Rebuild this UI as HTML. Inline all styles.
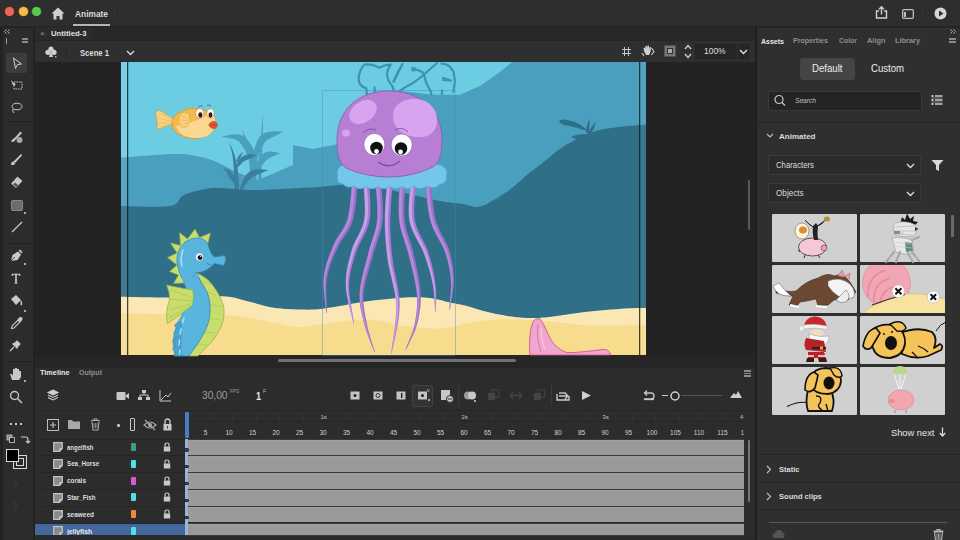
<!DOCTYPE html>
<html><head><meta charset="utf-8">
<style>
*{margin:0;padding:0;box-sizing:border-box}
html,body{width:960px;height:540px;overflow:hidden;background:#1d1d1d;font-family:"Liberation Sans",sans-serif;color:#d8d8d8}
.a{position:absolute}
.t{position:absolute;white-space:nowrap;line-height:1}
svg{position:absolute;overflow:visible}
</style></head><body>
<div class="a" style="left:0px;top:0px;width:960px;height:27px;background:#2e2e2e;"></div>
<div class="a" style="left:0px;top:26px;width:960px;height:1px;background:#242424;"></div>
<div class="a" style="left:5.1px;top:7.3px;width:9.2px;height:9.2px;border-radius:50%;background:#ec6559;box-shadow:0 0 0 0.6px #8a2a22"></div>
<div class="a" style="left:18.5px;top:7.3px;width:9.2px;height:9.2px;border-radius:50%;background:#f2bd4c;box-shadow:0 0 0 0.6px #8a6010"></div>
<div class="a" style="left:32.0px;top:7.3px;width:9.2px;height:9.2px;border-radius:50%;background:#5fc454;box-shadow:0 0 0 0.6px #1f6a18"></div>
<svg style="left:51px;top:7px" width="14" height="13" viewBox="0 0 14 13"><path d="M7 0.5 L13.5 6.5 L11.5 6.5 L11.5 12.5 L8.5 12.5 L8.5 9 L5.5 9 L5.5 12.5 L2.5 12.5 L2.5 6.5 L0.5 6.5 Z" fill="#cfcfcf"/></svg>
<div class="t" style="left:75px;top:9.46px;font-size:9.5px;color:#dcdcdc;font-weight:bold;transform:scaleX(0.880);transform-origin:0 0;">Animate</div>
<div class="a" style="left:73px;top:24px;width:37px;height:2px;background:#b5b5b5;"></div>
<div class="a" style="left:117px;top:8px;width:1px;height:12px;background:#282828;"></div>
<svg style="left:875px;top:6px" width="13" height="13" viewBox="0 0 13 13"><path d="M4 5 H1.5 V12 H11.5 V5 H9 M6.5 8.5 V1 M4 3.2 L6.5 0.8 L9 3.2" fill="none" stroke="#cfcfcf" stroke-width="1.4"/></svg>
<svg style="left:902px;top:9px" width="12" height="10" viewBox="0 0 12 10"><rect x="0.7" y="0.7" width="10.6" height="8.6" rx="1" fill="none" stroke="#bdbdbd" stroke-width="1.3"/><rect x="2" y="3" width="2" height="5" fill="#bdbdbd"/></svg>
<div class="a" style="left:925px;top:4px;width:1px;height:17px;background:#282828;"></div>
<svg style="left:934px;top:7px" width="13" height="13" viewBox="0 0 13 13"><circle cx="6.5" cy="6.5" r="6" fill="#d6d6d6"/><path d="M5 3.5 L9.5 6.5 L5 9.5 Z" fill="#2e2e2e"/></svg>
<div class="a" style="left:0px;top:27px;width:35px;height:513px;background:#222222;"></div>
<div class="a" style="left:3px;top:28px;width:30px;height:512px;background:#2c2c2c;"></div>
<div class="a" style="left:6px;top:38px;width:1px;height:6px;background:#9a9a9a;"></div>
<div class="a" style="left:22px;top:38px;width:6px;height:2px;background:#8a8a8a;"></div>
<div class="a" style="left:22px;top:41px;width:6px;height:2px;background:#8a8a8a;"></div>
<div class="a" style="left:6px;top:53px;width:21px;height:20px;background:#3c3c3c;border-radius:2px"></div>
<svg style="left:4px;top:29px" width="7" height="5" viewBox="0 0 7 5"><path d="M2.5 0.5 L0.5 2.5 L2.5 4.5 M5.5 0.5 L3.5 2.5 L5.5 4.5" stroke="#b0b0b0" fill="none" stroke-width="1"/></svg>
<svg style="left:12px;top:57px" width="11" height="13" viewBox="0 0 11 13"><path d="M1.5 1 L9.5 7 L5.5 7.5 L3.5 11.5 Z" fill="none" stroke="#d0d0d0" stroke-width="1"/></svg>
<svg style="left:10px;top:79px" width="14" height="13" viewBox="0 0 14 13"><path d="M1 1 L6 6 L3 6.5 Z" fill="#c8c8c8"/><rect x="4" y="3" width="8" height="7" fill="none" stroke="#c8c8c8" stroke-dasharray="1.5 1"/></svg>
<svg style="left:10px;top:102px" width="13" height="12" viewBox="0 0 13 12"><ellipse cx="7" cy="4.5" rx="5" ry="3.3" fill="none" stroke="#c8c8c8" stroke-width="1"/><path d="M3 7 Q2 9 4 11" fill="none" stroke="#c8c8c8"/></svg>
<div class="a" style="left:4px;top:121px;width:28px;height:1px;background:#232323;"></div>
<svg style="left:10px;top:130px" width="14" height="14" viewBox="0 0 14 14"><path d="M1 12 Q1.5 9 4 8.5 L10.5 1.5 L12 3 L5.5 9.5 Q5 12 1 12Z" fill="#c8c8c8"/><circle cx="9.5" cy="10" r="3" fill="#a8a8a8"/></svg>
<svg style="left:10px;top:153px" width="13" height="13" viewBox="0 0 13 13"><path d="M1 12 Q1 8.5 4 8 L11 1 L12.2 2.2 L5.5 9.5 Q5 12.5 1 12Z" fill="#c8c8c8"/><path d="M3.5 8.5 L5 10" stroke="#2c2c2c" stroke-width=".6"/></svg>
<svg style="left:10px;top:175px" width="13" height="13" viewBox="0 0 13 13"><path d="M1.5 8.5 L7.5 2 L12 6 L6 12.5 Z" fill="#c8c8c8" stroke="#c8c8c8" stroke-width=".8"/><path d="M3 9.5 L5 7.5 L8.5 10.5 L6 12Z" fill="#555"/></svg>
<svg style="left:10.5px;top:199.5px" width="12" height="11" viewBox="0 0 12 11"><rect x="0.5" y="0.5" width="11" height="10" rx="1" fill="#6c6c6c" stroke="#9a9a9a" stroke-width=".8"/></svg>
<div class="a" style="left:24px;top:212px;width:2px;height:2px;background:#aaa;"></div>
<svg style="left:10.5px;top:221px" width="12" height="12" viewBox="0 0 12 12"><path d="M1 11 L11 1" stroke="#c8c8c8" stroke-width="1.3"/></svg>
<div class="a" style="left:4px;top:243px;width:28px;height:1px;background:#232323;"></div>
<svg style="left:10px;top:249px" width="14" height="14" viewBox="0 0 14 14"><path d="M1 12 L2.5 6 L8 2.5 L11 5.5 L7.5 11 Z" fill="#c8c8c8"/><path d="M1 12 L5 8" stroke="#2c2c2c" stroke-width=".8"/><path d="M8.5 1.5 L10 0.5 L12.5 3 L11.5 4.5Z" fill="#c8c8c8"/></svg>
<div class="a" style="left:24px;top:262.5px;width:2px;height:2px;background:#aaa;"></div>
<div class="a" style="left:24px;top:309.5px;width:2px;height:2px;background:#aaa;"></div>
<div class="a" style="left:24px;top:380px;width:2px;height:2px;background:#aaa;"></div>
<svg style="left:11px;top:273px" width="10" height="11" viewBox="0 0 10 11"><path d="M0.7 0.7 H9.3 V3 H8.3 L8 1.8 H5.8 V9.5 L7 10.2 V10.6 H3 V10.2 L4.2 9.5 V1.8 H2 L1.7 3 H0.7Z" fill="#d0d0d0"/></svg>
<svg style="left:9px;top:294px" width="14" height="14" viewBox="0 0 14 14"><path d="M2 5 L7 1 L12 6 L7 11 Z" fill="#c8c8c8"/><path d="M12 7 Q13 10 12 11" stroke="#c8c8c8" stroke-width="1.5" fill="none"/></svg>
<svg style="left:10px;top:316px" width="14" height="14" viewBox="0 0 14 14"><path d="M1.5 12.5 L2 10 L8 4 L10 6 L4 12Z" fill="none" stroke="#c8c8c8" stroke-width="1.1"/><path d="M7.5 3 L10 1 Q12 0.5 12.5 2 Q13 3.5 11 5.5 L11 6.5 L7 2.5Z" fill="#c8c8c8"/></svg>
<svg style="left:9px;top:339px" width="13" height="13" viewBox="0 0 13 13"><path d="M1 12 L5 8 M4 5 L8 9 L9 7 L11 5 L8 2 L6 4 Z" stroke="#c8c8c8" stroke-width="1.2" fill="#c8c8c8"/></svg>
<div class="a" style="left:4px;top:361px;width:28px;height:1px;background:#232323;"></div>
<svg style="left:9px;top:367px" width="14" height="14" viewBox="0 0 14 14"><path d="M3 13 L1 7 L3 7 L4 9 L4 2 L6 2 L6 7 L6 1 L8 1 L8 7 L8 2 L10 2 L10 7 L10 4 L12 4 L12 10 L10 13 Z" fill="#c8c8c8"/></svg>
<svg style="left:9px;top:390px" width="14" height="14" viewBox="0 0 14 14"><circle cx="5.5" cy="5.5" r="4" fill="none" stroke="#c8c8c8" stroke-width="1.3"/><path d="M8.5 8.5 L13 13" stroke="#c8c8c8" stroke-width="1.5"/></svg>
<div class="a" style="left:10px;top:423px;width:2px;height:2px;background:#c8c8c8;"></div>
<div class="a" style="left:15px;top:423px;width:2px;height:2px;background:#c8c8c8;"></div>
<div class="a" style="left:20px;top:423px;width:2px;height:2px;background:#c8c8c8;"></div>
<svg style="left:6px;top:434px" width="10" height="10" viewBox="0 0 10 10"><rect x="1" y="1" width="5" height="5" fill="#888" stroke="#ccc" stroke-width=".8"/><rect x="3.5" y="3.5" width="5" height="5" fill="#222" stroke="#ccc" stroke-width=".8"/></svg>
<svg style="left:19px;top:434px" width="10" height="10" viewBox="0 0 10 10"><path d="M2 3 L7 3 Q9 3 9 6 L9 9 M7 7 L9 9 L11 7" stroke="#c8c8c8" stroke-width="1.2" fill="none"/></svg>
<div class="a" style="left:13px;top:455px;width:14px;height:14px;background:#2c2c2c;border:1.5px solid #d8d8d8"></div>
<div class="a" style="left:16px;top:458px;width:8px;height:8px;background:#2c2c2c;border:1px solid #d8d8d8"></div>
<div class="a" style="left:6px;top:449px;width:13px;height:13px;background:#000;border:1.5px solid #d8d8d8"></div>
<svg style="left:11px;top:478px" width="8" height="12" viewBox="0 0 8 12"><path d="M2 1 L6 6 L2 11" stroke="#3a3a3a" stroke-width="1.2" fill="none"/></svg>
<svg style="left:11px;top:500px" width="8" height="12" viewBox="0 0 8 12"><path d="M2 1 L6 6 L2 11" stroke="#3a3a3a" stroke-width="1.2" fill="none"/></svg>
<div class="a" style="left:35px;top:27px;width:721px;height:14px;background:#282828;"></div>
<div class="a" style="left:35px;top:27px;width:58px;height:14px;background:#2b2b2b;"></div>
<div class="t" style="left:40px;top:29.73px;font-size:8px;color:#9a9a9a;">×</div>
<div class="t" style="left:50.8px;top:29.91px;font-size:7.2px;color:#e0e0e0;font-weight:bold;transform:scaleX(1.069);transform-origin:0 0;">Untitled-3</div>
<div class="a" style="left:35px;top:40px;width:721px;height:22px;background:#2f2f2f;"></div>
<div class="a" style="left:35px;top:40px;width:721px;height:1px;background:#262626;"></div>
<svg style="left:45px;top:46px" width="12" height="12" viewBox="0 0 12 12"><circle cx="6" cy="3" r="2.6" fill="#cfcfcf"/><circle cx="3" cy="6.3" r="2.6" fill="#cfcfcf"/><circle cx="9" cy="6.3" r="2.6" fill="#cfcfcf"/><path d="M6 5 L8 11 L4 11 Z" fill="#cfcfcf"/><path d="M10 10 L11.5 10 L11.5 11.5 L10 11.5Z" fill="#aaa"/></svg>
<div class="a" style="left:66px;top:44px;width:1px;height:15px;background:#272727;"></div>
<div class="t" style="left:80px;top:47.79px;font-size:9.7px;color:#dedede;font-weight:bold;transform:scaleX(0.791);transform-origin:0 0;">Scene 1</div>
<svg style="left:126px;top:50px" width="9" height="6" viewBox="0 0 9 6"><path d="M1 1 L4.5 4.5 L8 1" fill="none" stroke="#d8d8d8" stroke-width="1.4"/></svg>
<svg style="left:621px;top:46px" width="11" height="11" viewBox="0 0 11 11"><path d="M3.5 1 V10 M7.5 1 V10 M1 3.5 H10 M1 7.5 H10" stroke="#cfcfcf" stroke-width="0.9"/><rect x="3.5" y="3.5" width="4" height="4" fill="none" stroke="#cfcfcf" stroke-width="0.6"/></svg>
<svg style="left:641px;top:44px" width="14" height="14" viewBox="0 0 14 14"><path d="M3 7 L2.5 4 L4 3.5 L4.5 5.5 L4.5 2 L6 1.8 L6.3 5 L6.5 1.5 L8 1.7 L8 5.2 L8.8 2.8 L10 3.2 L9.5 8 L8 11 L5 11 Z" fill="#d0d0d0"/><path d="M10.5 4 L13 7.5 L10.5 11 M1 9 L3 12" fill="none" stroke="#cfcfcf" stroke-width="1.1"/></svg>
<svg style="left:664px;top:45px" width="12" height="12" viewBox="0 0 12 12"><rect x="0.5" y="0.5" width="11" height="11" fill="#777"/><rect x="3" y="3" width="6" height="6" fill="#2f2f2f"/><rect x="4" y="4" width="4" height="4" fill="#aaa"/></svg>
<svg style="left:684px;top:44px" width="8" height="15" viewBox="0 0 8 15"><path d="M1 5 L4 1.5 L7 5 M1 10 L4 13.5 L7 10" fill="none" stroke="#cfcfcf" stroke-width="1.3"/></svg>
<div class="a" style="left:695px;top:44px;width:54px;height:15px;background:#262626;border:1px solid #232323"></div>
<div class="a" style="left:737px;top:44px;width:1px;height:15px;background:#333;"></div>
<div class="t" style="left:704.4px;top:47.22px;font-size:8.6px;color:#dedede;transform:scaleX(0.982);transform-origin:0 0;">100%</div>
<svg style="left:739px;top:49px" width="9" height="6" viewBox="0 0 9 6"><path d="M1 1 L4.5 4.5 L8 1" fill="none" stroke="#e0e0e0" stroke-width="1.4"/></svg>
<div class="a" style="left:35px;top:62px;width:721px;height:306px;background:#232323;"></div>
<div class="a" style="left:35px;top:356px;width:720px;height:11.5px;background:#262626;"></div>
<div class="a" style="left:278px;top:359px;width:238px;height:3px;background:#727272;border-radius:1.5px"></div>
<div class="a" style="left:748px;top:180px;width:2px;height:50px;background:#5a5a5a;border-radius:1px"></div>
<div class="a" style="left:755px;top:26px;width:2px;height:514px;background:#1f1f1f;"></div>
<svg style="left:121px;top:62px" width="525" height="293" viewBox="121 62 525 293"><rect x="121" y="62" width="525" height="293" fill="#6ccde2"/><g fill="none" stroke="#3f93b2" stroke-width="2.2" stroke-linecap="round" stroke-linejoin="round"><path d="M367 95 L366.3 88.1 Q361 87 359 82 Q358 76 360 72 Q362 66 365 64.4 Q372 64 376 66 Q379 68.5 381 67 Q385 64.5 390.7 64.6 Q387 70 387 74.8 Q387.5 80 390 83 Q394 87 394.4 95"/><path d="M374.4 87.4 L375.2 93"/><path d="M398 92 Q405 87 413 83 Q419 79 422 76.3 Q430 69 437 63"/><path d="M412.6 69 Q418 69.5 422.2 72 Q425 76 426 82.2 Q429 88 431 92 L432 100"/><path d="M441.5 63.7 Q448 64 450.4 67.4 Q454 71 454 74.8 Q455 80 454.8 82.2 Q454.5 86 453.3 92"/><path d="M442 90.4 L442.2 100"/></g><path d="M401.8 63 L404 63.5 Q399 73 394.5 83 L392 82 Q396 72 401.8 63Z" fill="#3f93b2"/><path d="M442.2 76.5 L451.9 79.7 L451.9 81.7 L442.2 81Z" fill="#3f93b2"/><path d="M411.5 67 L416 67.5 L416 71 L411.5 71.5Z" fill="#3f93b2"/><path d="M121 157.5 C150 156 170 153 188 154.5 C200 156 210 159 218 162.5 L236 172 L258 180 L293 165 L293 145 L313 149 L338 144 L380 115 L400 91 L433 94.8 L460 94.8 L480 86 L500 72 L512 62 L646 62 L646 355 L121 355 Z" fill="#4a9fbe"/><g fill="#2f6f87"><path d="M559 121 Q562 118 572 121 Q582 124 587 131 Q578 128 570 126 Q560 125 559 121Z"/><path d="M586 133 Q586 124 590 119 Q589 126 589 133Z"/><path d="M588 134 Q591 126 596 122 Q594 130 590 135Z"/><path d="M571 137 Q575 134 590 134 L590 139 Q578 141 571 137Z"/></g><path d="M261.6 190.0 L261.6 188.7 L261.6 187.1 L261.6 185.2 L261.5 183.1 L261.5 180.7 L261.5 178.3 L261.5 175.7 L261.5 173.2 L261.5 170.6 L261.6 168.0 L261.6 165.5 L261.7 162.8 L261.8 160.1 L261.9 157.2 L262.0 154.4 L262.1 151.5 L262.2 148.6 L262.3 145.7 L262.4 142.8 L262.5 140.1 L262.6 137.2 L262.7 134.2 L262.8 131.1 L262.9 128.0 L263.0 124.9 L263.0 122.0 L263.1 119.3 L263.2 116.9 L263.3 114.9 L263.3 113.3 L263.3 113.3 L263.1 114.9 L262.9 116.9 L262.6 119.3 L262.3 122.0 L262.0 124.9 L261.7 127.9 L261.4 131.0 L261.1 134.1 L260.8 137.1 L260.5 139.9 L260.2 142.7 L260.0 145.5 L259.7 148.4 L259.5 151.3 L259.3 154.2 L259.0 157.1 L258.8 159.9 L258.7 162.7 L258.5 165.4 L258.4 168.0 L258.3 170.5 L258.3 173.1 L258.3 175.7 L258.3 178.3 L258.3 180.8 L258.3 183.1 L258.4 185.2 L258.4 187.1 L258.4 188.7 L258.4 190.0Z" fill="#4a9fbe"/><path d="M255.7 190.0 L255.8 188.9 L255.9 187.5 L256.0 185.8 L256.1 184.0 L256.2 181.9 L256.4 179.8 L256.5 177.6 L256.6 175.5 L256.6 173.5 L256.7 171.6 L256.7 169.9 L256.8 168.3 L256.8 166.6 L256.9 164.9 L256.9 163.1 L256.9 161.3 L256.7 159.4 L256.4 157.5 L256.0 155.6 L255.4 153.6 L254.6 151.7 L253.7 149.7 L252.7 147.6 L251.5 145.6 L250.2 143.5 L248.8 141.6 L247.2 139.7 L245.5 138.1 L243.7 136.6 L241.7 135.4 L239.4 134.6 L237.1 134.2 L234.7 134.2 L232.4 134.4 L230.1 134.7 L228.0 135.2 L226.0 135.7 L224.3 136.1 L222.8 136.5 L221.7 136.7 L221.7 136.7 L222.8 137.0 L224.3 137.2 L226.1 137.5 L228.1 137.8 L230.1 138.2 L232.2 138.6 L234.1 139.1 L235.9 139.7 L237.3 140.4 L238.3 141.2 L239.3 142.1 L240.3 143.3 L241.4 144.7 L242.5 146.2 L243.6 147.9 L244.6 149.6 L245.6 151.4 L246.5 153.2 L247.4 154.9 L248.0 156.4 L248.6 157.8 L248.9 159.1 L249.2 160.5 L249.4 161.9 L249.5 163.4 L249.6 164.9 L249.7 166.6 L249.7 168.3 L249.8 170.0 L249.9 171.8 L250.1 173.6 L250.2 175.6 L250.3 177.7 L250.5 179.8 L250.6 181.9 L250.6 183.9 L250.7 185.8 L250.8 187.5 L250.8 188.9 L250.9 190.0Z" fill="#4a9fbe"/><path d="M252.4 159.8 L252.3 158.9 L252.2 157.8 L252.0 156.4 L251.8 154.8 L251.5 153.1 L251.2 151.4 L250.8 149.6 L250.4 147.8 L249.9 146.1 L249.4 144.5 L248.8 142.9 L248.0 141.3 L247.2 139.6 L246.3 137.9 L245.4 136.2 L244.5 134.7 L243.6 133.2 L242.8 131.9 L242.2 130.8 L241.7 130.0 L241.7 130.0 L242.0 130.9 L242.3 132.2 L242.8 133.6 L243.3 135.2 L243.9 136.9 L244.4 138.7 L245.0 140.5 L245.6 142.2 L246.1 143.9 L246.6 145.5 L247.1 147.0 L247.5 148.6 L248.0 150.3 L248.5 152.0 L249.0 153.7 L249.5 155.3 L249.9 156.8 L250.3 158.2 L250.7 159.3 L251.0 160.2Z" fill="#4a9fbe"/><path d="M256.8 160.4 L257.1 159.7 L257.4 158.8 L257.7 157.8 L258.1 156.6 L258.5 155.4 L258.9 154.1 L259.4 152.9 L259.9 151.7 L260.4 150.5 L261.0 149.5 L261.5 148.4 L262.1 147.2 L262.7 146.0 L263.2 144.9 L263.8 143.9 L264.3 143.0 L264.9 142.1 L265.6 141.4 L266.3 140.7 L267.0 140.1 L268.0 139.5 L269.4 138.8 L271.2 137.9 L273.1 137.0 L275.1 136.0 L277.2 135.0 L279.1 134.0 L280.8 133.1 L282.2 132.3 L283.3 131.7 L283.3 131.7 L282.1 131.7 L280.5 131.5 L278.5 131.4 L276.4 131.3 L274.0 131.3 L271.6 131.4 L269.3 131.7 L267.0 132.2 L264.9 132.9 L263.0 133.9 L261.4 135.0 L260.1 136.3 L259.0 137.7 L258.1 139.2 L257.3 140.6 L256.7 142.0 L256.2 143.4 L255.8 144.7 L255.4 145.9 L255.0 147.1 L254.6 148.5 L254.3 149.9 L254.0 151.4 L253.8 152.9 L253.6 154.3 L253.5 155.7 L253.4 156.9 L253.3 158.0 L253.2 158.9 L253.2 159.6Z" fill="#4a9fbe"/><path d="M256.5 172.9 L257.1 172.2 L257.8 171.2 L258.6 170.1 L259.5 168.9 L260.4 167.6 L261.4 166.3 L262.3 165.0 L263.2 163.8 L264.0 162.8 L264.7 162.0 L265.3 161.4 L265.8 160.8 L266.3 160.3 L266.7 159.9 L267.1 159.6 L267.4 159.3 L267.8 159.0 L268.2 158.8 L268.8 158.4 L269.4 158.1 L270.1 157.7 L271.1 157.3 L272.2 156.8 L273.4 156.3 L274.7 155.7 L276.0 155.1 L277.3 154.6 L278.4 154.1 L279.3 153.6 L280.0 153.3 L280.0 153.3 L279.3 153.1 L278.3 152.9 L277.1 152.6 L275.8 152.3 L274.3 152.0 L272.9 151.7 L271.4 151.6 L269.9 151.6 L268.5 151.7 L267.2 151.9 L266.1 152.2 L265.2 152.6 L264.3 153.0 L263.4 153.6 L262.6 154.1 L261.9 154.8 L261.2 155.5 L260.6 156.2 L260.0 157.0 L259.3 158.0 L258.6 159.1 L257.8 160.5 L257.1 161.9 L256.4 163.5 L255.8 165.0 L255.2 166.6 L254.6 168.0 L254.2 169.3 L253.8 170.3 L253.5 171.1Z" fill="#4a9fbe"/><path d="M238.9 190.1 L239.0 189.7 L239.0 189.4 L239.0 189.0 L239.0 188.6 L239.1 188.0 L239.1 187.3 L239.1 186.5 L239.1 185.5 L239.0 184.4 L238.9 183.2 L238.8 181.7 L238.7 179.9 L238.5 177.9 L238.3 175.8 L238.1 173.6 L237.8 171.3 L237.6 169.1 L237.3 166.9 L236.9 164.9 L236.6 163.1 L236.3 161.4 L235.9 159.9 L235.5 158.4 L235.1 157.0 L234.7 155.7 L234.3 154.4 L233.9 153.2 L233.5 152.0 L233.1 150.9 L232.7 149.8 L232.2 148.7 L231.7 147.7 L231.2 146.7 L230.7 145.8 L230.2 144.9 L229.7 144.1 L229.3 143.4 L228.9 142.7 L228.6 142.2 L228.3 141.7 L228.3 141.7 L228.5 142.2 L228.7 142.8 L229.0 143.5 L229.4 144.3 L229.7 145.1 L230.1 146.1 L230.4 147.1 L230.7 148.1 L231.1 149.1 L231.3 150.2 L231.6 151.3 L231.8 152.5 L232.1 153.7 L232.3 154.9 L232.5 156.2 L232.7 157.5 L232.9 158.9 L233.1 160.4 L233.3 161.9 L233.4 163.5 L233.5 165.3 L233.6 167.3 L233.8 169.4 L233.9 171.6 L234.0 173.9 L234.1 176.1 L234.2 178.2 L234.3 180.2 L234.4 182.0 L234.5 183.4 L234.5 184.6 L234.6 185.7 L234.6 186.5 L234.6 187.2 L234.6 187.8 L234.5 188.3 L234.5 188.8 L234.5 189.2 L234.5 189.6 L234.5 189.9Z" fill="#3a7f9c"/><path d="M237.5 167.6 L237.9 167.2 L238.4 166.7 L239.0 166.1 L239.6 165.4 L240.3 164.7 L241.0 163.9 L241.7 163.3 L242.4 162.6 L243.0 162.1 L243.5 161.7 L244.0 161.3 L244.5 161.0 L245.0 160.8 L245.5 160.5 L246.1 160.2 L246.6 160.0 L247.2 159.8 L247.8 159.5 L248.4 159.2 L249.0 158.9 L249.7 158.6 L250.5 158.2 L251.3 157.8 L252.2 157.4 L253.1 156.9 L254.0 156.5 L254.8 156.0 L255.6 155.6 L256.2 155.3 L256.7 155.0 L256.7 155.0 L256.2 154.9 L255.5 154.8 L254.6 154.6 L253.7 154.5 L252.7 154.4 L251.6 154.3 L250.5 154.2 L249.5 154.2 L248.5 154.3 L247.6 154.5 L246.8 154.7 L246.0 154.9 L245.3 155.1 L244.6 155.4 L243.9 155.8 L243.2 156.2 L242.5 156.6 L241.8 157.1 L241.1 157.7 L240.5 158.3 L239.8 159.1 L239.2 159.9 L238.6 160.8 L238.1 161.8 L237.6 162.7 L237.1 163.7 L236.7 164.5 L236.4 165.3 L236.1 165.9 L235.9 166.4Z" fill="#3a7f9c"/><path d="M237.7 162.3 L237.9 162.0 L238.3 161.6 L238.6 161.0 L239.0 160.4 L239.4 159.8 L239.8 159.1 L240.1 158.4 L240.4 157.7 L240.7 157.1 L240.9 156.5 L241.1 156.0 L241.4 155.5 L241.7 154.9 L242.0 154.3 L242.2 153.8 L242.5 153.3 L242.8 152.8 L243.0 152.4 L243.2 152.0 L243.3 151.7 L243.3 151.7 L243.0 151.9 L242.7 152.2 L242.3 152.4 L241.9 152.8 L241.4 153.2 L241.0 153.6 L240.5 154.0 L240.0 154.5 L239.5 154.9 L239.1 155.5 L238.7 156.0 L238.3 156.6 L237.9 157.3 L237.5 158.0 L237.2 158.7 L236.9 159.5 L236.7 160.1 L236.5 160.8 L236.4 161.3 L236.3 161.7Z" fill="#3a7f9c"/><path d="M237.6 184.5 L237.4 183.9 L237.2 183.2 L236.9 182.4 L236.6 181.4 L236.2 180.4 L235.8 179.4 L235.4 178.3 L234.9 177.4 L234.5 176.5 L234.1 175.7 L233.7 175.0 L233.3 174.4 L233.0 173.8 L232.6 173.3 L232.2 172.7 L231.8 172.2 L231.3 171.7 L230.8 171.2 L230.2 170.8 L229.6 170.3 L229.0 169.9 L228.3 169.6 L227.5 169.3 L226.8 169.1 L226.1 168.9 L225.4 168.7 L224.7 168.6 L224.2 168.5 L223.7 168.4 L223.3 168.3 L223.3 168.3 L223.5 168.6 L223.8 169.0 L224.2 169.4 L224.6 169.9 L225.1 170.5 L225.5 171.0 L225.9 171.6 L226.3 172.1 L226.7 172.6 L227.0 173.1 L227.2 173.5 L227.4 174.0 L227.7 174.4 L227.9 174.9 L228.2 175.4 L228.4 175.9 L228.7 176.5 L229.1 177.0 L229.5 177.7 L229.9 178.3 L230.4 179.0 L231.0 179.7 L231.6 180.6 L232.3 181.4 L233.0 182.3 L233.7 183.1 L234.3 183.8 L234.9 184.5 L235.4 185.1 L235.8 185.5Z" fill="#3a7f9c"/><path d="M242.1 190.5 L242.5 189.9 L243.0 189.2 L243.5 188.3 L244.1 187.3 L244.8 186.2 L245.5 185.2 L246.2 184.1 L246.9 183.1 L247.6 182.3 L248.2 181.5 L248.8 180.8 L249.4 180.1 L250.0 179.5 L250.6 178.9 L251.1 178.3 L251.7 177.8 L252.3 177.3 L252.9 176.9 L253.7 176.4 L254.5 176.0 L255.5 175.5 L256.7 174.9 L258.2 174.3 L259.9 173.6 L261.6 172.9 L263.2 172.2 L264.8 171.6 L266.2 170.9 L267.4 170.4 L268.3 170.0 L268.3 170.0 L267.3 169.9 L266.0 169.8 L264.5 169.7 L262.8 169.6 L260.9 169.5 L259.0 169.5 L257.2 169.6 L255.4 169.8 L253.7 170.2 L252.1 170.6 L250.8 171.2 L249.7 171.8 L248.7 172.6 L247.7 173.3 L246.9 174.1 L246.2 175.0 L245.5 175.8 L244.9 176.7 L244.4 177.5 L243.8 178.5 L243.2 179.5 L242.6 180.8 L242.1 182.0 L241.7 183.3 L241.3 184.6 L240.9 185.8 L240.6 187.0 L240.3 188.0 L240.1 188.8 L239.9 189.5Z" fill="#3a7f9c"/><path d="M121.0 206.0 L125.0 206.1 L130.6 206.2 L137.4 206.5 L144.7 206.7 L152.1 206.8 L159.1 206.7 L165.3 206.5 L170.0 206.0 L173.3 205.2 L175.7 204.0 L177.3 202.6 L178.5 201.1 L179.4 199.5 L180.3 198.0 L181.4 196.6 L183.0 195.5 L185.0 194.5 L187.1 193.7 L189.2 192.9 L191.5 192.2 L193.7 191.6 L196.0 191.0 L198.3 190.5 L200.5 190.0 L202.6 189.6 L204.4 189.2 L206.2 188.8 L208.0 188.5 L210.0 188.3 L212.2 188.1 L214.9 188.0 L218.0 188.0 L221.6 188.1 L225.4 188.3 L229.5 188.7 L233.9 189.1 L238.7 189.4 L243.9 189.8 L249.5 190.0 L255.5 190.0 L262.3 189.9 L269.9 189.6 L278.1 189.2 L286.6 188.8 L295.1 188.3 L303.4 187.8 L311.1 187.4 L318.0 187.0 L324.1 186.6 L329.5 186.1 L334.6 185.6 L339.3 185.1 L343.8 184.7 L348.4 184.4 L353.1 184.3 L358.0 184.5 L363.2 184.9 L368.4 185.6 L373.7 186.5 L379.0 187.5 L384.3 188.6 L389.6 189.8 L394.8 190.9 L400.0 192.0 L405.2 193.1 L410.6 194.3 L415.9 195.6 L421.2 196.8 L426.4 198.1 L431.3 199.2 L435.9 200.3 L440.0 201.1 L443.7 201.8 L446.9 202.2 L449.9 202.6 L452.6 202.9 L455.1 203.1 L457.5 203.3 L459.8 203.6 L462.2 203.9 L464.6 204.3 L466.8 204.8 L468.9 205.4 L470.9 206.0 L472.9 206.4 L474.9 206.7 L476.9 206.9 L478.9 206.7 L481.0 206.3 L483.1 205.6 L485.2 204.7 L487.3 203.7 L489.3 202.5 L491.4 201.3 L493.5 200.1 L495.6 198.9 L497.7 197.7 L499.8 196.4 L501.8 195.1 L503.9 193.8 L506.0 192.4 L508.0 190.9 L510.1 189.4 L512.2 187.8 L514.3 186.1 L516.5 184.3 L518.7 182.3 L520.9 180.4 L523.0 178.4 L525.1 176.6 L527.1 174.8 L528.9 173.3 L530.4 172.0 L531.7 171.1 L532.8 170.3 L533.8 169.5 L534.9 168.7 L536.3 167.8 L537.9 166.6 L540.0 165.0 L542.5 163.0 L545.4 160.6 L548.6 157.9 L552.0 155.1 L555.5 152.2 L559.2 149.4 L562.9 146.8 L566.7 144.4 L570.5 142.2 L574.3 140.2 L578.1 138.2 L582.1 136.3 L586.3 134.5 L590.6 132.8 L595.2 131.3 L600.0 130.0 L605.5 128.8 L611.7 127.9 L618.3 127.0 L625.1 126.3 L631.6 125.8 L637.4 125.3 L642.4 124.9 L646.0 124.5 L646 355 L121 355 Z" fill="#2f6f87"/><path d="M121.0 296.7 L124.8 296.8 L129.7 296.9 L135.6 297.0 L142.2 297.2 L149.2 297.3 L156.4 297.4 L163.4 297.5 L170.0 297.5 L176.6 297.4 L183.5 297.2 L190.6 296.9 L197.8 296.6 L204.7 296.4 L211.2 296.2 L217.2 296.1 L222.5 296.2 L226.9 296.6 L230.7 297.0 L233.9 297.6 L236.7 298.3 L239.3 299.0 L241.9 299.8 L244.6 300.5 L247.5 301.2 L250.6 302.0 L253.8 302.8 L256.9 303.7 L260.0 304.6 L263.1 305.4 L266.2 306.2 L269.4 306.9 L272.5 307.5 L275.6 308.0 L278.8 308.3 L281.9 308.6 L285.0 308.9 L288.1 309.1 L291.2 309.2 L294.4 309.3 L297.5 309.4 L300.5 309.5 L303.3 309.6 L306.0 309.6 L308.8 309.7 L311.7 309.6 L314.8 309.5 L318.4 309.2 L322.5 308.8 L327.2 308.1 L332.5 307.3 L338.2 306.3 L344.2 305.2 L350.3 304.1 L356.3 303.0 L362.1 302.1 L367.5 301.2 L372.6 300.6 L377.7 299.9 L382.7 299.4 L387.5 298.9 L392.2 298.4 L396.7 298.1 L401.0 297.7 L405.0 297.5 L408.8 297.3 L412.2 297.2 L415.5 297.2 L418.6 297.2 L421.5 297.3 L424.4 297.5 L427.2 297.7 L430.0 298.0 L432.8 298.4 L435.5 298.9 L438.1 299.5 L440.6 300.1 L443.1 300.7 L445.5 301.4 L447.8 302.0 L450.0 302.5 L452.0 302.9 L453.9 303.3 L455.6 303.6 L457.2 303.9 L458.9 304.2 L460.7 304.6 L462.7 305.0 L465.0 305.6 L467.6 306.3 L470.5 307.1 L473.6 308.0 L476.9 309.0 L480.2 309.9 L483.5 310.9 L486.8 311.7 L490.0 312.5 L493.1 313.2 L496.3 313.9 L499.5 314.5 L502.7 315.1 L505.8 315.7 L509.0 316.2 L512.0 316.6 L515.0 317.0 L517.9 317.3 L520.7 317.6 L523.4 317.8 L526.1 317.9 L528.8 318.0 L531.5 318.1 L534.2 318.1 L537.0 318.0 L539.8 317.9 L542.6 317.6 L545.5 317.4 L548.3 317.0 L551.2 316.7 L554.1 316.3 L557.0 315.9 L560.0 315.5 L562.9 315.1 L565.8 314.7 L568.6 314.3 L571.4 313.8 L574.4 313.4 L577.6 312.9 L581.1 312.4 L585.0 312.0 L589.4 311.5 L594.4 311.1 L599.7 310.6 L605.2 310.1 L610.7 309.6 L616.0 309.2 L620.8 308.8 L625.0 308.5 L628.7 308.3 L632.1 308.2 L635.2 308.1 L638.0 308.0 L640.5 308.0 L642.7 308.0 L644.5 308.0 L646.0 308.0 L646 355 L121 355 Z" fill="#fbe7b3"/><path d="M121.0 313.6 L129.4 313.7 L141.0 313.8 L155.0 314.0 L170.2 314.1 L185.6 314.3 L200.1 314.5 L212.8 314.8 L222.5 315.0 L229.3 315.2 L234.1 315.5 L237.5 315.7 L239.8 316.0 L241.5 316.3 L243.0 316.7 L244.9 317.1 L247.5 317.5 L250.6 318.0 L253.8 318.6 L256.9 319.2 L260.0 319.9 L263.1 320.6 L266.2 321.2 L269.4 321.9 L272.5 322.5 L275.6 323.1 L278.8 323.8 L281.9 324.5 L285.0 325.2 L288.1 325.8 L291.2 326.3 L294.4 326.7 L297.5 326.9 L300.5 326.9 L303.3 326.7 L306.0 326.3 L308.8 325.9 L311.7 325.4 L314.9 324.8 L318.4 324.3 L322.5 323.8 L327.2 323.2 L332.4 322.5 L338.0 321.7 L343.9 321.0 L349.9 320.3 L355.9 319.7 L361.6 319.4 L367.0 319.4 L372.1 319.7 L377.0 320.4 L381.9 321.3 L386.6 322.3 L391.3 323.3 L395.9 324.4 L400.4 325.3 L405.0 326.0 L409.6 326.6 L414.2 327.1 L418.8 327.6 L423.3 328.0 L427.7 328.3 L432.0 328.5 L436.1 328.6 L440.0 328.5 L443.6 328.2 L447.0 327.8 L450.1 327.2 L453.1 326.5 L456.1 325.8 L459.0 325.0 L461.9 324.3 L465.0 323.8 L468.1 323.2 L471.2 322.7 L474.4 322.1 L477.5 321.6 L480.6 321.1 L483.8 320.7 L486.9 320.3 L490.0 320.0 L493.0 319.7 L495.8 319.5 L498.5 319.4 L501.2 319.3 L504.2 319.2 L507.3 319.2 L510.9 319.3 L515.0 319.4 L519.8 319.6 L525.2 319.9 L531.1 320.3 L537.2 320.7 L543.3 321.2 L549.3 321.6 L555.0 322.1 L560.0 322.5 L564.3 322.9 L567.9 323.3 L571.2 323.8 L574.3 324.2 L577.5 324.6 L581.0 325.0 L585.1 325.3 L590.0 325.5 L596.1 325.6 L603.5 325.6 L611.6 325.5 L619.9 325.4 L628.0 325.3 L635.3 325.2 L641.5 325.1 L646.0 325.0 L646 355 L121 355 Z" fill="#f8dc8e"/><rect x="121" y="62" width="6.2" height="293" fill="#fff" opacity="0.08"/><rect x="640.2" y="62" width="5.8" height="293" fill="#fff" opacity="0.06"/><rect x="127.2" y="62" width="1" height="293" fill="#141a1c"/><rect x="639.2" y="62" width="1" height="293" fill="#141a1c"/><g><path d="M174 119 Q166 115 160 110.5 Q155 111 156 114 Q157 120 157.5 126 Q156 129 159 129 Q166 126 174 124Z" fill="#f8d487" stroke="#e3a23a" stroke-width="0.8"/><path d="M159 113 L172 120 M158 118 L172 121.5 M158 123 L172 123 M159 127 L172 124" stroke="#eab355" stroke-width="0.7"/><ellipse cx="194" cy="123.5" rx="22" ry="15" fill="#f4b84d" stroke="#dd9a35" stroke-width="0.9"/><path d="M176 126 Q180 138 196 138 Q212 138 215 126 Q205 130 195 128 Q184 127 176 126Z" fill="#fbd892"/><path d="M178 125 Q182 137 196 137.5 Q212 137.5 215.5 124 Q216 116 210 112 Q200 122 178 125Z" fill="#fbd892"/><path d="M181 113 Q190 110 190 120 Q189 129 181 127 Q177 120 181 113Z" fill="#f9d07e" stroke="#e3a23a" stroke-width="0.6"/><path d="M182 116 L188 119 M181 120 L188 121 M182 124 L188 123" stroke="#e8ac4a" stroke-width="0.6"/><ellipse cx="199.8" cy="113.5" rx="4" ry="5" fill="#fff" stroke="#c98a2a" stroke-width="0.6"/><ellipse cx="210.5" cy="113.5" rx="3.6" ry="4.8" fill="#fff" stroke="#c98a2a" stroke-width="0.6"/><ellipse cx="200.3" cy="115" rx="2" ry="2.8" fill="#3a1a10"/><ellipse cx="210.5" cy="115" rx="1.9" ry="2.8" fill="#3a1a10"/><path d="M209 124 Q212 120 216 122 Q219 125 216 128 Q212 130 209 126Z" fill="#df5a2e" stroke="#b8401e" stroke-width="0.5"/><path d="M211 125 L216 125" stroke="#9a3018" stroke-width="0.6"/><path d="M198 107 Q200 105 203 106 M207 105 L211 105.5" stroke="#2d6f8c" stroke-width="0.8" fill="none"/></g><path d="M352.1 179.7 L351.9 181.7 L351.7 184.3 L351.4 187.3 L351.2 190.7 L350.9 194.3 L350.5 198.1 L350.1 202.0 L349.7 205.9 L349.2 209.6 L348.6 213.2 L348.0 216.4 L347.3 219.2 L346.5 221.7 L345.6 224.0 L344.6 226.1 L343.4 228.1 L342.2 230.1 L341.0 232.1 L339.7 234.0 L338.3 236.0 L337.0 238.1 L335.8 240.3 L334.6 242.6 L333.5 245.0 L332.4 247.4 L331.4 249.9 L330.4 252.4 L329.4 254.9 L328.5 257.5 L327.6 260.1 L326.7 262.8 L325.9 265.5 L325.2 268.3 L324.6 271.1 L324.1 273.9 L323.7 276.8 L323.5 279.8 L323.4 283.1 L323.5 286.5 L323.7 290.0 L324.0 293.5 L324.4 297.0 L324.8 300.4 L325.2 303.5 L325.6 306.5 L325.9 309.1 L326.2 311.3 L326.4 313.0 L327.0 313.0 L327.0 311.2 L326.9 309.0 L326.8 306.4 L326.7 303.4 L326.5 300.2 L326.4 296.9 L326.3 293.4 L326.3 289.9 L326.3 286.5 L326.5 283.2 L326.7 280.1 L327.1 277.2 L327.6 274.5 L328.2 271.9 L328.9 269.3 L329.8 266.7 L330.6 264.1 L331.6 261.6 L332.6 259.1 L333.6 256.6 L334.7 254.2 L335.8 251.8 L336.9 249.4 L337.9 247.0 L339.0 244.8 L340.2 242.8 L341.4 240.8 L342.7 238.9 L344.0 237.0 L345.4 235.0 L346.8 233.0 L348.1 230.9 L349.4 228.6 L350.6 226.2 L351.7 223.6 L352.7 220.8 L353.5 217.7 L354.2 214.2 L354.8 210.5 L355.4 206.6 L355.9 202.6 L356.3 198.7 L356.6 194.8 L356.9 191.1 L357.2 187.7 L357.5 184.8 L357.7 182.3 L357.9 180.3Z" fill="#9a70c4"/><path d="M352.6 179.7 L352.4 181.7 L352.2 184.3 L351.9 187.3 L351.7 190.7 L351.4 194.3 L351.0 198.1 L350.6 202.0 L350.2 205.9 L349.7 209.7 L349.1 213.3 L348.5 216.5 L347.8 219.4 L347.0 221.8 L346.0 224.1 L345.0 226.3 L343.8 228.4 L342.6 230.4 L341.4 232.3 L340.0 234.3 L338.7 236.3 L337.4 238.3 L336.1 240.5 L334.9 242.8 L333.8 245.2 L332.8 247.6 L331.8 250.0 L330.8 252.5 L329.8 255.1 L328.8 257.7 L327.9 260.3 L327.0 262.9 L326.2 265.6 L325.5 268.4 L324.9 271.1 L324.4 274.0 L324.0 276.8 L323.8 279.8 L323.7 283.1 L323.8 286.5 L324.0 290.0 L324.2 293.5 L324.6 297.0 L324.9 300.4 L325.3 303.5 L325.7 306.5 L326.0 309.1 L326.3 311.3 L326.5 313.0 L326.8 313.0 L326.7 311.2 L326.5 309.0 L326.3 306.4 L326.1 303.5 L325.8 300.3 L325.6 296.9 L325.4 293.5 L325.3 290.0 L325.2 286.5 L325.3 283.1 L325.4 280.0 L325.7 277.0 L326.2 274.3 L326.8 271.6 L327.5 268.9 L328.2 266.2 L329.1 263.6 L330.0 261.0 L331.0 258.5 L332.0 256.0 L333.0 253.5 L334.1 251.0 L335.1 248.6 L336.2 246.2 L337.2 243.9 L338.4 241.8 L339.7 239.8 L341.0 237.8 L342.3 235.8 L343.6 233.9 L345.0 231.9 L346.3 229.8 L347.5 227.6 L348.6 225.3 L349.7 222.8 L350.6 220.2 L351.3 217.2 L352.0 213.8 L352.6 210.1 L353.1 206.3 L353.6 202.4 L354.0 198.4 L354.3 194.6 L354.6 190.9 L354.9 187.6 L355.2 184.6 L355.4 182.0 L355.6 180.1Z" fill="#b48ade"/><path d="M363.1 180.1 L363.2 182.1 L363.4 184.7 L363.6 187.6 L363.8 190.9 L364.1 194.5 L364.3 198.2 L364.5 202.1 L364.6 205.9 L364.7 209.7 L364.6 213.3 L364.4 216.6 L364.0 219.5 L363.5 222.2 L362.7 224.8 L361.8 227.3 L360.8 229.8 L359.6 232.2 L358.4 234.7 L357.2 237.1 L355.9 239.6 L354.7 242.1 L353.5 244.8 L352.4 247.5 L351.5 250.3 L350.8 253.0 L350.0 255.8 L349.3 258.5 L348.6 261.3 L347.9 264.1 L347.3 267.0 L346.8 269.8 L346.4 272.7 L346.0 275.7 L345.8 278.7 L345.6 281.7 L345.7 284.8 L345.9 288.1 L346.3 291.6 L346.8 295.3 L347.6 299.0 L348.4 302.8 L349.2 306.5 L350.1 310.1 L351.0 313.5 L351.8 316.6 L352.6 319.4 L353.2 321.8 L353.6 323.7 L354.2 323.5 L353.9 321.6 L353.5 319.2 L353.0 316.4 L352.5 313.2 L351.9 309.7 L351.3 306.1 L350.7 302.4 L350.1 298.6 L349.7 294.9 L349.3 291.3 L349.2 287.9 L349.1 284.8 L349.3 281.9 L349.5 279.0 L349.9 276.2 L350.4 273.4 L350.9 270.6 L351.6 267.9 L352.2 265.2 L353.0 262.5 L353.8 259.8 L354.6 257.1 L355.4 254.4 L356.3 251.7 L357.2 249.2 L358.2 246.8 L359.3 244.4 L360.6 242.0 L361.9 239.6 L363.2 237.1 L364.5 234.6 L365.8 232.0 L366.9 229.3 L368.0 226.5 L368.9 223.6 L369.6 220.5 L370.0 217.1 L370.3 213.5 L370.4 209.7 L370.4 205.8 L370.3 201.8 L370.1 197.9 L369.9 194.1 L369.6 190.5 L369.4 187.2 L369.1 184.3 L369.0 181.8 L368.9 179.9Z" fill="#a57ad0"/><path d="M363.6 180.1 L363.7 182.1 L363.9 184.6 L364.1 187.6 L364.3 190.9 L364.6 194.4 L364.8 198.2 L365.0 202.0 L365.1 205.9 L365.2 209.7 L365.1 213.3 L364.9 216.6 L364.5 219.6 L363.9 222.3 L363.2 224.9 L362.3 227.5 L361.2 230.0 L360.1 232.4 L358.8 234.9 L357.6 237.3 L356.3 239.8 L355.1 242.3 L353.9 244.9 L352.8 247.6 L352.0 250.4 L351.2 253.1 L350.4 255.9 L349.7 258.6 L349.0 261.4 L348.3 264.2 L347.7 267.0 L347.2 269.9 L346.7 272.8 L346.3 275.7 L346.1 278.7 L346.0 281.7 L346.0 284.8 L346.1 288.1 L346.5 291.6 L347.1 295.2 L347.8 299.0 L348.6 302.8 L349.4 306.5 L350.3 310.1 L351.1 313.5 L351.9 316.6 L352.6 319.4 L353.2 321.8 L353.7 323.6 L354.0 323.6 L353.6 321.7 L353.1 319.3 L352.6 316.5 L351.9 313.3 L351.2 309.9 L350.5 306.3 L349.8 302.5 L349.1 298.8 L348.6 295.0 L348.1 291.4 L347.8 288.0 L347.8 284.8 L347.8 281.8 L348.0 278.9 L348.4 276.0 L348.8 273.1 L349.3 270.3 L349.9 267.5 L350.5 264.7 L351.2 262.0 L352.0 259.3 L352.8 256.6 L353.6 253.8 L354.4 251.2 L355.3 248.5 L356.3 246.0 L357.5 243.5 L358.7 241.0 L360.0 238.6 L361.3 236.1 L362.6 233.7 L363.8 231.1 L364.9 228.5 L365.9 225.8 L366.7 223.0 L367.4 220.1 L367.8 216.9 L368.0 213.4 L368.1 209.7 L368.1 205.8 L368.0 201.9 L367.8 198.0 L367.6 194.2 L367.3 190.7 L367.1 187.4 L366.8 184.4 L366.7 181.9 L366.6 180.0Z" fill="#c7a0ec"/><path d="M375.1 180.2 L375.2 182.2 L375.4 184.7 L375.7 187.6 L376.0 190.9 L376.3 194.4 L376.6 198.1 L376.8 201.9 L377.1 205.8 L377.2 209.6 L377.2 213.2 L377.2 216.6 L377.0 219.7 L376.6 222.6 L376.1 225.4 L375.6 228.1 L374.9 230.8 L374.1 233.4 L373.3 236.1 L372.4 238.8 L371.6 241.5 L370.7 244.2 L369.8 247.1 L368.9 250.0 L368.2 253.0 L367.4 256.1 L366.6 259.3 L365.7 262.5 L364.8 265.9 L363.9 269.3 L363.0 272.7 L362.2 276.1 L361.5 279.4 L360.8 282.8 L360.2 286.1 L359.8 289.3 L359.6 292.3 L359.5 295.3 L359.5 298.2 L359.7 301.0 L359.9 303.7 L360.3 306.4 L360.7 309.0 L361.2 311.5 L361.8 314.0 L362.4 316.5 L363.0 319.0 L363.6 321.4 L364.2 323.9 L364.9 326.5 L365.7 329.1 L366.6 331.9 L367.6 334.6 L368.6 337.3 L369.6 340.0 L370.6 342.5 L371.5 344.9 L372.4 347.1 L373.2 349.1 L373.8 350.8 L374.3 352.1 L374.9 351.9 L374.5 350.5 L373.9 348.8 L373.3 346.8 L372.6 344.5 L371.8 342.1 L371.0 339.5 L370.2 336.8 L369.4 334.0 L368.6 331.3 L367.9 328.5 L367.3 325.9 L366.8 323.3 L366.3 320.8 L365.8 318.4 L365.3 315.9 L364.9 313.4 L364.5 310.9 L364.1 308.4 L363.8 305.9 L363.5 303.4 L363.4 300.8 L363.4 298.1 L363.4 295.4 L363.6 292.7 L364.0 289.8 L364.5 286.8 L365.1 283.7 L365.9 280.5 L366.7 277.2 L367.6 273.9 L368.6 270.5 L369.6 267.2 L370.5 263.9 L371.5 260.6 L372.4 257.4 L373.2 254.4 L374.0 251.4 L374.9 248.6 L375.8 245.9 L376.7 243.2 L377.6 240.5 L378.6 237.8 L379.4 235.0 L380.3 232.3 L381.0 229.4 L381.7 226.5 L382.2 223.4 L382.6 220.3 L382.9 216.9 L383.0 213.3 L382.9 209.4 L382.8 205.5 L382.6 201.6 L382.4 197.7 L382.1 193.9 L381.8 190.4 L381.5 187.1 L381.2 184.2 L381.0 181.7 L380.9 179.8Z" fill="#9a70c4"/><path d="M375.6 180.1 L375.7 182.1 L375.9 184.6 L376.2 187.5 L376.5 190.8 L376.8 194.3 L377.1 198.1 L377.3 201.9 L377.6 205.8 L377.7 209.6 L377.7 213.2 L377.7 216.7 L377.5 219.8 L377.1 222.7 L376.6 225.5 L376.0 228.2 L375.3 230.9 L374.6 233.6 L373.8 236.2 L372.9 238.9 L372.0 241.6 L371.1 244.4 L370.2 247.2 L369.4 250.1 L368.6 253.1 L367.8 256.2 L367.0 259.4 L366.1 262.7 L365.2 266.0 L364.3 269.4 L363.4 272.8 L362.6 276.2 L361.8 279.5 L361.2 282.9 L360.6 286.1 L360.2 289.3 L359.9 292.4 L359.8 295.3 L359.8 298.2 L360.0 301.0 L360.3 303.7 L360.6 306.3 L361.0 308.9 L361.5 311.5 L362.1 314.0 L362.6 316.5 L363.2 318.9 L363.9 321.4 L364.5 323.8 L365.1 326.4 L365.9 329.1 L366.8 331.8 L367.7 334.6 L368.7 337.3 L369.7 339.9 L370.7 342.5 L371.6 344.9 L372.5 347.1 L373.2 349.1 L373.9 350.7 L374.4 352.1 L374.7 352.0 L374.2 350.6 L373.6 348.9 L372.9 346.9 L372.2 344.7 L371.3 342.3 L370.4 339.7 L369.6 337.0 L368.7 334.3 L367.8 331.5 L367.0 328.8 L366.3 326.1 L365.8 323.5 L365.2 321.1 L364.7 318.6 L364.2 316.1 L363.7 313.7 L363.2 311.2 L362.8 308.6 L362.4 306.1 L362.1 303.5 L361.9 300.9 L361.8 298.2 L361.9 295.4 L362.0 292.5 L362.3 289.6 L362.8 286.5 L363.4 283.3 L364.1 280.1 L364.9 276.7 L365.8 273.4 L366.7 270.0 L367.7 266.7 L368.6 263.4 L369.5 260.1 L370.4 256.9 L371.2 253.8 L372.0 250.9 L372.9 248.0 L373.8 245.2 L374.7 242.5 L375.6 239.8 L376.5 237.1 L377.3 234.4 L378.1 231.7 L378.9 228.9 L379.5 226.0 L380.0 223.1 L380.4 220.1 L380.6 216.8 L380.7 213.2 L380.7 209.5 L380.5 205.6 L380.3 201.7 L380.1 197.9 L379.8 194.1 L379.5 190.6 L379.2 187.3 L378.9 184.4 L378.7 181.9 L378.6 180.0Z" fill="#b48ade"/><path d="M387.1 179.8 L387.0 181.7 L386.8 184.1 L386.5 187.0 L386.3 190.2 L386.0 193.7 L385.7 197.4 L385.4 201.2 L385.2 205.1 L385.0 209.0 L384.8 212.8 L384.7 216.5 L384.7 220.0 L384.7 223.3 L384.7 226.5 L384.8 229.7 L385.0 232.9 L385.2 236.0 L385.4 239.2 L385.6 242.4 L385.9 245.6 L386.2 248.9 L386.6 252.3 L387.0 255.7 L387.5 259.2 L388.0 262.9 L388.7 266.7 L389.6 270.5 L390.4 274.3 L391.4 278.2 L392.3 282.1 L393.2 286.0 L394.1 290.0 L394.8 293.9 L395.4 297.8 L395.9 301.7 L396.1 305.5 L396.2 309.5 L396.0 313.8 L395.7 318.3 L395.2 323.0 L394.7 327.6 L394.1 332.2 L393.5 336.6 L392.9 340.8 L392.3 344.6 L391.8 348.1 L391.4 351.0 L391.1 353.4 L391.7 353.4 L392.1 351.1 L392.8 348.3 L393.5 344.9 L394.4 341.1 L395.3 336.9 L396.2 332.5 L397.1 328.0 L397.9 323.3 L398.6 318.7 L399.1 314.1 L399.5 309.7 L399.7 305.5 L399.6 301.4 L399.3 297.3 L398.8 293.3 L398.2 289.2 L397.5 285.2 L396.7 281.2 L395.9 277.2 L395.1 273.3 L394.3 269.5 L393.6 265.7 L393.0 262.1 L392.5 258.6 L392.2 255.1 L391.8 251.7 L391.5 248.4 L391.3 245.2 L391.0 242.0 L390.8 238.9 L390.7 235.7 L390.5 232.6 L390.4 229.5 L390.4 226.4 L390.3 223.2 L390.3 220.0 L390.4 216.6 L390.5 213.0 L390.7 209.3 L390.9 205.4 L391.2 201.6 L391.5 197.8 L391.8 194.1 L392.1 190.6 L392.3 187.5 L392.6 184.6 L392.8 182.2 L392.9 180.2Z" fill="#a57ad0"/><path d="M387.6 179.8 L387.5 181.8 L387.3 184.2 L387.0 187.0 L386.8 190.2 L386.5 193.7 L386.2 197.4 L385.9 201.2 L385.7 205.1 L385.5 209.0 L385.3 212.8 L385.2 216.5 L385.1 220.0 L385.2 223.3 L385.2 226.5 L385.3 229.7 L385.5 232.9 L385.6 236.0 L385.8 239.2 L386.1 242.4 L386.4 245.6 L386.7 248.9 L387.0 252.2 L387.4 255.6 L387.9 259.2 L388.5 262.8 L389.2 266.6 L390.0 270.4 L390.8 274.2 L391.8 278.1 L392.7 282.0 L393.6 286.0 L394.4 289.9 L395.1 293.8 L395.8 297.8 L396.2 301.7 L396.4 305.5 L396.5 309.5 L396.3 313.9 L395.9 318.4 L395.5 323.0 L394.9 327.6 L394.3 332.2 L393.6 336.6 L393.0 340.8 L392.4 344.7 L391.9 348.1 L391.4 351.0 L391.2 353.4 L391.5 353.4 L391.8 351.1 L392.4 348.2 L393.0 344.8 L393.8 341.0 L394.6 336.8 L395.4 332.4 L396.1 327.8 L396.8 323.2 L397.4 318.5 L397.9 314.0 L398.2 309.6 L398.3 305.5 L398.1 301.5 L397.8 297.5 L397.2 293.5 L396.6 289.5 L395.8 285.5 L395.0 281.5 L394.1 277.6 L393.2 273.7 L392.4 269.9 L391.7 266.1 L391.0 262.4 L390.5 258.8 L390.1 255.3 L389.8 251.9 L389.4 248.6 L389.1 245.4 L388.9 242.2 L388.7 239.0 L388.5 235.9 L388.3 232.7 L388.2 229.6 L388.1 226.4 L388.1 223.2 L388.1 220.0 L388.1 216.6 L388.2 213.0 L388.4 209.2 L388.7 205.3 L388.9 201.4 L389.2 197.6 L389.5 193.9 L389.8 190.5 L390.0 187.3 L390.3 184.4 L390.5 182.0 L390.6 180.0Z" fill="#c7a0ec"/><path d="M399.7 179.9 L399.6 181.8 L399.5 184.3 L399.3 187.2 L399.1 190.4 L398.9 194.0 L398.7 197.8 L398.6 201.7 L398.5 205.6 L398.4 209.5 L398.5 213.3 L398.7 216.9 L399.0 220.3 L399.4 223.5 L400.0 226.5 L400.7 229.4 L401.5 232.3 L402.3 235.0 L403.2 237.8 L404.1 240.5 L405.0 243.2 L405.9 245.9 L406.8 248.6 L407.6 251.4 L408.4 254.3 L409.1 257.4 L409.9 260.6 L410.7 263.8 L411.6 267.1 L412.4 270.4 L413.2 273.8 L413.9 277.1 L414.6 280.4 L415.3 283.6 L415.8 286.7 L416.3 289.7 L416.6 292.7 L416.8 295.5 L417.0 298.2 L417.0 300.9 L417.0 303.6 L416.9 306.2 L416.8 308.7 L416.6 311.2 L416.3 313.7 L416.0 316.1 L415.6 318.5 L415.2 320.9 L414.8 323.3 L414.2 325.7 L413.6 328.2 L412.8 330.7 L411.9 333.2 L411.0 335.7 L410.0 338.2 L409.1 340.5 L408.1 342.7 L407.3 344.8 L406.5 346.6 L405.9 348.1 L405.4 349.4 L406.0 349.6 L406.5 348.4 L407.3 346.9 L408.2 345.2 L409.2 343.2 L410.2 341.1 L411.4 338.8 L412.5 336.4 L413.6 333.9 L414.7 331.4 L415.7 328.9 L416.5 326.3 L417.2 323.9 L417.8 321.5 L418.4 319.1 L418.9 316.6 L419.3 314.1 L419.7 311.6 L420.1 309.0 L420.4 306.4 L420.6 303.7 L420.7 301.0 L420.8 298.2 L420.7 295.3 L420.6 292.3 L420.4 289.3 L420.0 286.1 L419.6 282.9 L419.1 279.5 L418.5 276.2 L417.8 272.8 L417.1 269.4 L416.3 266.0 L415.6 262.6 L414.9 259.4 L414.1 256.2 L413.4 253.1 L412.7 250.1 L411.9 247.1 L411.1 244.3 L410.2 241.5 L409.3 238.8 L408.4 236.1 L407.6 233.4 L406.8 230.8 L406.1 228.1 L405.5 225.3 L405.0 222.6 L404.6 219.7 L404.4 216.6 L404.2 213.2 L404.2 209.5 L404.2 205.7 L404.4 201.9 L404.5 198.0 L404.7 194.3 L404.9 190.8 L405.1 187.5 L405.3 184.6 L405.4 182.1 L405.5 180.1Z" fill="#9a70c4"/><path d="M400.2 179.9 L400.1 181.8 L400.0 184.3 L399.8 187.2 L399.6 190.5 L399.4 194.0 L399.2 197.8 L399.1 201.7 L399.0 205.6 L398.9 209.5 L399.0 213.3 L399.2 216.9 L399.5 220.3 L399.9 223.4 L400.5 226.4 L401.2 229.3 L401.9 232.1 L402.8 234.9 L403.7 237.6 L404.6 240.3 L405.5 243.0 L406.4 245.7 L407.2 248.5 L408.1 251.3 L408.8 254.2 L409.6 257.3 L410.3 260.4 L411.2 263.7 L412.0 267.0 L412.8 270.3 L413.6 273.7 L414.3 277.0 L415.0 280.3 L415.6 283.5 L416.2 286.7 L416.6 289.7 L416.9 292.6 L417.1 295.4 L417.3 298.2 L417.3 300.9 L417.3 303.6 L417.2 306.2 L417.1 308.7 L416.8 311.2 L416.6 313.7 L416.2 316.2 L415.9 318.6 L415.5 321.0 L415.0 323.4 L414.4 325.8 L413.8 328.2 L412.9 330.8 L412.1 333.3 L411.1 335.8 L410.1 338.2 L409.2 340.6 L408.2 342.8 L407.4 344.8 L406.6 346.6 L406.0 348.2 L405.5 349.4 L405.8 349.5 L406.3 348.3 L407.0 346.8 L407.8 345.0 L408.8 343.0 L409.8 340.9 L410.8 338.6 L411.9 336.1 L412.9 333.6 L413.9 331.1 L414.8 328.6 L415.6 326.1 L416.3 323.7 L416.8 321.3 L417.3 318.9 L417.7 316.4 L418.1 313.9 L418.5 311.4 L418.8 308.9 L419.0 306.3 L419.1 303.6 L419.2 300.9 L419.2 298.2 L419.2 295.4 L419.0 292.5 L418.8 289.5 L418.4 286.4 L417.9 283.1 L417.3 279.9 L416.7 276.5 L416.0 273.2 L415.2 269.8 L414.4 266.4 L413.7 263.1 L412.9 259.8 L412.1 256.7 L411.4 253.6 L410.7 250.6 L409.9 247.7 L409.0 244.9 L408.1 242.1 L407.2 239.4 L406.4 236.7 L405.5 234.1 L404.7 231.4 L404.0 228.6 L403.3 225.8 L402.8 222.9 L402.4 219.9 L402.1 216.7 L402.0 213.2 L401.9 209.5 L402.0 205.7 L402.1 201.8 L402.2 197.9 L402.4 194.2 L402.6 190.6 L402.8 187.4 L403.0 184.5 L403.1 182.0 L403.2 180.0Z" fill="#b48ade"/><path d="M410.8 179.8 L410.7 181.7 L410.4 184.1 L410.1 187.0 L409.8 190.3 L409.4 193.9 L409.1 197.7 L408.8 201.6 L408.6 205.5 L408.5 209.5 L408.5 213.3 L408.8 217.0 L409.2 220.5 L410.0 223.7 L410.9 226.9 L412.1 229.9 L413.4 232.9 L414.8 235.8 L416.3 238.6 L417.8 241.4 L419.3 244.1 L420.7 246.7 L422.0 249.3 L423.2 251.9 L424.2 254.5 L425.2 257.1 L426.1 259.7 L426.9 262.4 L427.7 265.0 L428.5 267.5 L429.3 270.1 L429.9 272.7 L430.6 275.2 L431.2 277.7 L431.8 280.2 L432.3 282.6 L432.8 285.0 L433.2 287.5 L433.6 290.0 L433.9 292.6 L434.1 295.2 L434.3 297.8 L434.5 300.4 L434.6 302.8 L434.8 305.1 L434.9 307.2 L435.0 309.1 L435.1 310.7 L435.2 312.0 L435.8 312.0 L435.8 310.7 L435.9 309.1 L436.0 307.2 L436.0 305.1 L436.1 302.8 L436.2 300.3 L436.2 297.8 L436.2 295.1 L436.2 292.4 L436.1 289.8 L435.9 287.1 L435.6 284.6 L435.3 282.1 L434.9 279.6 L434.5 277.0 L434.1 274.4 L433.5 271.8 L433.0 269.2 L432.4 266.5 L431.7 263.8 L431.0 261.1 L430.3 258.4 L429.4 255.7 L428.6 252.9 L427.6 250.1 L426.4 247.3 L425.1 244.5 L423.7 241.7 L422.3 239.0 L420.9 236.2 L419.6 233.5 L418.3 230.7 L417.1 227.9 L416.1 225.1 L415.3 222.3 L414.8 219.5 L414.4 216.5 L414.2 213.1 L414.2 209.5 L414.3 205.8 L414.5 201.9 L414.8 198.1 L415.2 194.4 L415.5 190.9 L415.9 187.6 L416.2 184.7 L416.5 182.2 L416.6 180.2Z" fill="#a57ad0"/><path d="M411.3 179.8 L411.2 181.8 L410.9 184.2 L410.6 187.1 L410.3 190.4 L409.9 193.9 L409.6 197.7 L409.3 201.6 L409.1 205.6 L409.0 209.5 L409.0 213.3 L409.3 217.0 L409.7 220.4 L410.4 223.6 L411.4 226.7 L412.5 229.8 L413.8 232.7 L415.2 235.6 L416.7 238.4 L418.2 241.1 L419.6 243.9 L421.1 246.5 L422.4 249.1 L423.6 251.7 L424.6 254.3 L425.5 257.0 L426.4 259.6 L427.3 262.2 L428.1 264.9 L428.9 267.5 L429.6 270.0 L430.3 272.6 L430.9 275.1 L431.5 277.6 L432.0 280.1 L432.6 282.6 L433.0 285.0 L433.4 287.4 L433.8 290.0 L434.1 292.6 L434.3 295.2 L434.5 297.8 L434.6 300.4 L434.8 302.8 L434.9 305.1 L435.0 307.2 L435.1 309.1 L435.2 310.7 L435.3 312.0 L435.6 312.0 L435.5 310.7 L435.5 309.1 L435.5 307.2 L435.5 305.1 L435.5 302.8 L435.5 300.3 L435.5 297.8 L435.4 295.2 L435.3 292.5 L435.1 289.9 L434.8 287.3 L434.5 284.8 L434.1 282.3 L433.7 279.8 L433.2 277.3 L432.7 274.7 L432.1 272.2 L431.5 269.6 L430.8 266.9 L430.1 264.3 L429.4 261.6 L428.6 258.9 L427.7 256.3 L426.9 253.5 L425.8 250.8 L424.7 248.1 L423.3 245.4 L422.0 242.7 L420.5 239.9 L419.1 237.2 L417.7 234.4 L416.4 231.6 L415.1 228.7 L414.1 225.8 L413.2 222.9 L412.6 219.9 L412.2 216.7 L412.0 213.2 L411.9 209.5 L412.0 205.7 L412.2 201.8 L412.5 197.9 L412.9 194.2 L413.3 190.7 L413.6 187.4 L413.9 184.5 L414.2 182.0 L414.3 180.0Z" fill="#c7a0ec"/><path d="M424.9 180.3 L425.1 182.3 L425.4 184.7 L425.6 187.6 L425.9 191.0 L426.2 194.6 L426.6 198.4 L427.0 202.3 L427.5 206.2 L428.1 210.1 L428.7 213.9 L429.4 217.4 L430.2 220.7 L431.2 223.8 L432.3 226.7 L433.5 229.6 L434.9 232.3 L436.2 234.9 L437.6 237.4 L439.0 239.9 L440.4 242.4 L441.7 244.7 L442.8 247.1 L443.9 249.4 L444.8 251.7 L445.6 254.1 L446.3 256.5 L447.0 258.8 L447.7 261.1 L448.2 263.4 L448.7 265.7 L449.2 268.0 L449.6 270.3 L450.0 272.6 L450.3 274.9 L450.5 277.3 L450.7 279.7 L450.9 282.1 L450.9 284.8 L450.9 287.6 L450.8 290.4 L450.6 293.3 L450.4 296.2 L450.2 298.9 L450.0 301.5 L449.8 303.9 L449.6 306.1 L449.5 307.9 L449.4 309.4 L450.0 309.4 L450.2 308.0 L450.5 306.2 L450.9 304.1 L451.3 301.7 L451.8 299.1 L452.2 296.4 L452.7 293.5 L453.1 290.6 L453.4 287.7 L453.7 284.9 L453.8 282.1 L453.9 279.5 L453.8 277.1 L453.7 274.6 L453.5 272.2 L453.3 269.8 L453.0 267.4 L452.6 265.0 L452.2 262.6 L451.8 260.2 L451.2 257.8 L450.6 255.3 L450.0 252.8 L449.2 250.3 L448.3 247.7 L447.3 245.1 L446.1 242.5 L444.8 240.0 L443.5 237.5 L442.2 235.0 L440.9 232.5 L439.7 229.9 L438.5 227.3 L437.4 224.7 L436.4 222.0 L435.6 219.3 L434.9 216.3 L434.3 212.9 L433.7 209.3 L433.2 205.5 L432.7 201.6 L432.3 197.8 L432.0 194.0 L431.7 190.5 L431.4 187.1 L431.1 184.2 L430.9 181.7 L430.7 179.7Z" fill="#9a70c4"/><path d="M425.4 180.3 L425.6 182.2 L425.9 184.7 L426.1 187.6 L426.4 190.9 L426.7 194.5 L427.1 198.3 L427.5 202.2 L428.0 206.2 L428.5 210.0 L429.2 213.8 L429.9 217.3 L430.7 220.6 L431.6 223.6 L432.7 226.6 L434.0 229.4 L435.3 232.1 L436.6 234.7 L438.0 237.2 L439.4 239.7 L440.8 242.1 L442.0 244.5 L443.2 246.9 L444.3 249.3 L445.2 251.6 L446.0 254.0 L446.7 256.4 L447.4 258.7 L448.0 261.1 L448.6 263.4 L449.1 265.7 L449.5 268.0 L449.9 270.3 L450.3 272.6 L450.6 274.9 L450.8 277.3 L451.0 279.6 L451.1 282.1 L451.2 284.8 L451.1 287.6 L451.0 290.5 L450.8 293.4 L450.6 296.2 L450.4 299.0 L450.1 301.6 L449.9 304.0 L449.7 306.1 L449.6 307.9 L449.5 309.4 L449.8 309.4 L449.9 308.0 L450.2 306.2 L450.5 304.0 L450.8 301.6 L451.2 299.1 L451.5 296.3 L451.9 293.5 L452.2 290.6 L452.4 287.7 L452.6 284.9 L452.7 282.1 L452.6 279.6 L452.5 277.2 L452.3 274.8 L452.1 272.4 L451.8 270.0 L451.5 267.7 L451.1 265.3 L450.6 262.9 L450.1 260.6 L449.6 258.2 L448.9 255.8 L448.2 253.3 L447.5 250.8 L446.6 248.3 L445.5 245.9 L444.3 243.4 L443.1 240.9 L441.8 238.5 L440.4 236.0 L439.1 233.4 L437.8 230.8 L436.5 228.2 L435.4 225.5 L434.3 222.7 L433.5 219.8 L432.7 216.7 L432.0 213.3 L431.5 209.6 L430.9 205.8 L430.5 201.9 L430.1 198.0 L429.7 194.2 L429.4 190.7 L429.1 187.3 L428.8 184.4 L428.6 181.9 L428.4 179.9Z" fill="#b48ade"/><path d="M343 165 Q365 177 389 177 Q413 177 437 164 Q449 167 446.5 176 Q447 184 439 184.5 Q435 190 427 186 Q421 191 414 186.5 Q408 191 402 186.5 Q396 191 390 186.5 Q384 191 378 186.5 Q372 191 366 186.5 Q360 191 354 186 Q347 189 343 184 Q336 183 337.5 176 Q336 167 343 165Z" fill="#74c6ea" stroke="#55abd8" stroke-width="0.8"/><path d="M389 91 C418 91 442 108 442 140 C442 155 439 163 433 167 Q412 177 389 177 Q366 177 346 168 C339 163 337 155 337 140 C337 108 360 91 389 91 Z" fill="#b67fd4" stroke="#8e5db2" stroke-width="0.9"/><ellipse cx="363" cy="112" rx="15" ry="10.5" transform="rotate(-35 363 112)" fill="#d8a4ef"/><path d="M393 116 C393 104 404 98 416 99 C430 100 438 110 437 122 C436 133 428 138 417 137 C403 136 393 128 393 116Z" fill="#d8a4ef"/><ellipse cx="346" cy="133" rx="4" ry="3.5" fill="#d8a4ef"/><path d="M363 133 Q369 127 376 130 M395 130 Q402 126 408 132" stroke="#7d4fa0" stroke-width="0.9" fill="none"/><ellipse cx="374.4" cy="144.5" rx="10.5" ry="11" fill="#fff" stroke="#8c5cb0" stroke-width="0.6"/><ellipse cx="401.7" cy="145" rx="10.5" ry="11" fill="#fff" stroke="#8c5cb0" stroke-width="0.6"/><circle cx="376.5" cy="148" r="6.3" fill="#111"/><circle cx="401" cy="148.5" r="6.3" fill="#111"/><circle cx="376.5" cy="151.5" r="2.4" fill="#fff"/><circle cx="400.5" cy="152" r="2.4" fill="#fff"/><path d="M378 162 Q389 170 400 161" stroke="#7d4fa0" stroke-width="1.3" fill="none"/><rect x="322.5" y="90.5" width="133" height="265" fill="none" stroke="#3b8fc6" stroke-width="0.7" opacity="0.6"/><g stroke-linejoin="round"><path d="M190 293 L184 283 L173.5 283.5 L178.5 275 L169.5 271.5 L177 265 L167.5 257.5 L177 253 L170.5 243 L180.5 245.5 L179.5 232.5 L187.5 239 L195 229 L199.5 237.5 L210.5 233 L207 247 L196 262 Z" fill="#c8dd6b" stroke="#8cae3e" stroke-width="0.7"/><path d="M196.0 272.5 L197.3 273.2 L199.1 274.2 L201.3 275.3 L203.6 276.7 L205.9 278.2 L208.0 280.0 L210.0 282.1 L212.0 284.4 L213.9 287.0 L215.8 289.7 L217.5 292.4 L219.0 295.0 L220.3 297.5 L221.4 300.0 L222.3 302.5 L223.1 305.0 L223.7 307.5 L224.0 310.0 L224.1 312.5 L224.0 315.0 L223.7 317.5 L223.2 320.0 L222.5 322.5 L221.7 325.0 L220.7 327.5 L219.4 330.1 L217.9 332.7 L216.3 335.2 L214.7 337.7 L213.0 340.0 L211.2 342.3 L209.1 344.5 L207.0 346.7 L205.0 348.7 L203.2 350.5 L201.7 352.0 L200.6 353.2 L199.8 354.1 L199.1 354.8 L198.7 355.3 L198.3 355.7 L198.0 356.0 L189.0 356.0 L189.2 355.7 L189.5 355.3 L189.8 354.8 L190.3 354.1 L190.9 353.2 L191.7 352.0 L192.8 350.5 L194.1 348.7 L195.5 346.7 L197.1 344.5 L198.6 342.3 L200.0 340.0 L201.4 337.7 L202.7 335.2 L204.1 332.7 L205.4 330.1 L206.5 327.5 L207.5 325.0 L208.3 322.5 L208.9 320.0 L209.3 317.5 L209.7 315.0 L209.9 312.5 L210.0 310.0 L210.0 307.5 L209.9 305.0 L209.7 302.5 L209.3 300.0 L208.7 297.5 L208.0 295.0 L207.0 292.4 L205.6 289.7 L204.1 287.0 L202.6 284.4 L201.2 282.1 L200.0 280.0 L199.1 278.2 L198.2 276.7 L197.5 275.3 L196.9 274.2 L196.4 273.2 L196.0 272.5 Z" fill="#c8dd6b" stroke="#8cae3e" stroke-width="0.7"/><path d="M203 282 L211 284 M207 292 L216 295 M209 304 L220 307 M209 318 L220 320 M205 332 L215 333 M198 344 L207 345" stroke="#a9c553" stroke-width="0.7"/><path d="M196.0 272.5 L196.4 273.2 L196.9 274.2 L197.5 275.3 L198.2 276.7 L199.1 278.2 L200.0 280.0 L201.2 282.1 L202.6 284.4 L204.1 287.0 L205.6 289.7 L207.0 292.4 L208.0 295.0 L208.7 297.5 L209.3 300.0 L209.7 302.5 L209.9 305.0 L210.0 307.5 L210.0 310.0 L209.9 312.5 L209.7 315.0 L209.3 317.5 L208.9 320.0 L208.3 322.5 L207.5 325.0 L206.5 327.5 L205.4 330.1 L204.1 332.7 L202.7 335.2 L201.4 337.7 L200.0 340.0 L198.6 342.3 L197.1 344.5 L195.6 346.7 L194.1 348.7 L192.8 350.5 L191.7 352.0 L190.9 353.2 L190.3 354.1 L189.8 354.8 L189.5 355.3 L189.2 355.7 L189.0 356.0 L175 356 L175.0 356.0 L174.9 355.4 L174.7 354.6 L174.5 353.6 L174.3 352.5 L174.2 351.3 L174.0 350.0 L173.8 348.6 L173.6 347.1 L173.4 345.6 L173.2 343.9 L173.2 342.0 L173.3 340.0 L173.6 337.7 L174.1 335.2 L174.6 332.5 L175.3 329.8 L176.0 327.3 L176.7 325.0 L177.5 323.1 L178.3 321.5 L179.2 320.0 L180.1 318.5 L181.1 316.9 L182.0 315.0 L183.1 312.8 L184.3 310.4 L185.5 307.8 L186.6 305.2 L187.5 302.6 L188.0 300.0 L188.0 297.5 L187.7 294.9 L187.2 292.4 L186.5 289.9 L185.7 287.4 L185.0 285.0 L184.3 282.7 L183.4 280.4 L182.5 278.2 L181.6 276.0 L180.7 274.0 L180.0 272.0 L179.3 270.0 L178.7 268.1 L178.2 266.2 L177.7 264.5 L177.3 263.1 L177.0 262.0 Z" fill="#5ab5de" stroke="#3288b8" stroke-width="0.7"/><path d="M200 238 Q208 240 209 248 Q211 255 214.4 257 L224.8 255.5 Q227 261 223.5 265.5 L214.4 263.5 Q210 268 206.6 270 Q201 273 196 272.5 Q193 276 190 280 L183 280 Q178 272 177 262 Q176 250 185 242 Q192 237 200 238 Z" fill="#5ab5de" stroke="#3288b8" stroke-width="0.7"/><path d="M182 279 L194 279 L197 274" stroke="#5ab5de" stroke-width="3" fill="none"/><path d="M193 290 Q180 288 166.5 285 Q170 293 169.5 300 Q165 312 167.5 323.5 Q182 314 192.5 305 Q194 298 193 290 Z" fill="#c8dd6b" stroke="#8cae3e" stroke-width="0.7"/><path d="M171 290 L191 297 M170.5 299 L192 301 M169.5 310 L191 304 M169 318 L189 307" stroke="#a9c553" stroke-width="0.7"/><path d="M178 322 L174.5 325 L177 329 L173.5 333 L176 337 L172.5 341 L175.5 345 L172.5 349 L175.5 352 L174 356 L181 356 L181 322Z" fill="#4aa3cf" stroke="#3288b8" stroke-width="0.6"/><path d="M183 250 Q180 258 182 266" stroke="#a8e0f2" stroke-width="1.6" fill="none" stroke-linecap="round"/><path d="M184 318 L182.5 323 M181 329 L180 334 M179.5 340 L179 345 M180 350 L179.5 354" stroke="#a8e0f2" stroke-width="1.5" stroke-linecap="round"/><circle cx="199.5" cy="257" r="4" fill="#fff" stroke="#3288b8" stroke-width="0.5"/><circle cx="200" cy="257.6" r="2.4" fill="#111"/><circle cx="200.8" cy="256.6" r="0.7" fill="#fff"/><path d="M206.5 262.5 Q208 265 211 264.5" stroke="#2f7faa" stroke-width="0.8" fill="none"/></g><path d="M529.9 355 C529 342 530 328 533 322 C534.5 318.5 538.5 318 541 320 C545 326 547 333 550 338 C553 344 558 349 566.5 352.5 C575 353 590 351 603 349.5 C607 349 609.5 351 610.5 355 Z" fill="#f1a6cf" stroke="#c95a86" stroke-width="0.9"/><path d="M538 324 Q536 338 541 352" stroke="#c95a86" stroke-width="0.6" fill="none"/><path d="M541 328 Q541 340 545 350" stroke="#f8cde6" stroke-width="1" fill="none"/></svg>
<div class="a" style="left:35px;top:367.5px;width:720px;height:172.5px;background:#2c2c2c;"></div>
<div class="t" style="left:39.5px;top:369.32px;font-size:7.3px;color:#e6e6e6;font-weight:bold;transform:scaleX(1.001);transform-origin:0 0;">Timeline</div>
<div class="t" style="left:79px;top:369.15px;font-size:7.5px;color:#8e8e8e;font-weight:bold;transform:scaleX(0.936);transform-origin:0 0;">Output</div>
<div class="a" style="left:744px;top:370px;width:7px;height:1.5px;background:#8a8a8a;"></div>
<div class="a" style="left:744px;top:372.5px;width:7px;height:1.5px;background:#8a8a8a;"></div>
<div class="a" style="left:744px;top:375px;width:7px;height:1.5px;background:#8a8a8a;"></div>
<svg style="left:47px;top:389px" width="12" height="13" viewBox="0 0 12 13"><path d="M6 1 L11 3.5 L6 6 L1 3.5Z M1 6 L6 8.5 L11 6 M1 8.5 L6 11 L11 8.5" fill="none" stroke="#d0d0d0" stroke-width="1.1"/><path d="M6 1 L11 3.5 L6 6 L1 3.5Z" fill="#d0d0d0"/></svg>
<svg style="left:116px;top:391px" width="14" height="10" viewBox="0 0 14 10"><rect x="0.5" y="1" width="9" height="8" rx="1" fill="#c8c8c8"/><path d="M9.5 4.5 L13 2 L13 8 L9.5 5.5Z" fill="#c8c8c8"/></svg>
<svg style="left:137px;top:389px" width="14" height="14" viewBox="0 0 14 14"><rect x="5" y="1" width="4" height="3" fill="#c8c8c8"/><rect x="1" y="8" width="4" height="3" fill="#c8c8c8"/><rect x="9" y="8" width="4" height="3" fill="#c8c8c8"/><path d="M7 4 V6 M3 8 V6 H11 V8" stroke="#c8c8c8" fill="none"/></svg>
<svg style="left:159px;top:389px" width="13" height="13" viewBox="0 0 13 13"><path d="M1 1 V12 H12 M2 11 L7 6 L9 8 L12 4" stroke="#c8c8c8" fill="none" stroke-width="1"/></svg>
<div class="t" style="left:202px;top:391.20px;font-size:10.4px;color:#9c9c9c;transform:scaleX(0.980);transform-origin:0 0;">30,00</div>
<div class="t" style="left:229.5px;top:389.69px;font-size:4.5px;color:#9c9c9c;transform:scaleX(1.028);transform-origin:0 0;">FPS</div>
<div class="t" style="left:256px;top:391.11px;font-size:10.5px;color:#e8e8e8;font-weight:bold;transform:scaleX(0.856);transform-origin:0 0;">1</div>
<div class="t" style="left:263px;top:389.27px;font-size:5px;color:#bcbcbc;">F</div>
<svg style="left:349.5px;top:391px" width="10" height="9" viewBox="0 0 10 9"><rect x="0.5" y="0.5" width="9" height="8" fill="#c4c4c4"/><circle cx="5" cy="4.5" r="1.5" fill="#222"/></svg>
<svg style="left:372.5px;top:391px" width="10" height="9" viewBox="0 0 10 9"><rect x="0.5" y="0.5" width="9" height="8" fill="#c4c4c4"/><circle cx="5" cy="4.5" r="2" fill="none" stroke="#333" stroke-width="1"/></svg>
<svg style="left:396px;top:391px" width="10" height="9" viewBox="0 0 10 9"><rect x="0.5" y="0.5" width="9" height="8" fill="#c4c4c4"/><rect x="5" y="2" width="1.4" height="5" fill="#222"/></svg>
<div class="a" style="left:411.5px;top:385px;width:21px;height:22px;background:#333333;border:1px solid #444;border-radius:2px"></div>
<svg style="left:417px;top:388px" width="14" height="14" viewBox="0 0 14 14"><rect x="1" y="3.5" width="9" height="8" fill="#c4c4c4"/><circle cx="5.5" cy="7.5" r="1.5" fill="#222"/><path d="M10 1 L12 4 M10.5 4 L12.5 1.5" stroke="#aaa" stroke-width=".8"/><rect x="11" y="11" width="2" height="2" fill="#aaa"/></svg>
<svg style="left:440px;top:389px" width="14" height="14" viewBox="0 0 14 14"><rect x="1" y="1" width="9" height="10" fill="#c8c8c8"/><circle cx="10" cy="10" r="3.5" fill="#c8c8c8" stroke="#2e2e2e"/><path d="M8 10 H12" stroke="#2e2e2e"/></svg>
<div class="a" style="left:458px;top:386px;width:1px;height:20px;background:#3a3a3a;"></div>
<svg style="left:463px;top:390px" width="14" height="12" viewBox="0 0 14 12"><circle cx="5" cy="5.5" r="4" fill="#9a9a9a"/><circle cx="9" cy="5.5" r="4" fill="#c8c8c8"/><rect x="11" y="10" width="2" height="2" fill="#aaa"/></svg>
<svg style="left:487px;top:389px" width="13" height="12" viewBox="0 0 13 12"><rect x="1" y="4" width="7" height="7" fill="#444"/><rect x="5" y="1" width="7" height="7" fill="none" stroke="#444"/></svg>
<svg style="left:533px;top:389px" width="13" height="12" viewBox="0 0 13 12"><rect x="1" y="4" width="7" height="7" fill="#444"/><rect x="5" y="1" width="7" height="7" fill="none" stroke="#444"/></svg>
<svg style="left:509px;top:391px" width="14" height="9" viewBox="0 0 14 9"><path d="M1 4.5 L4 1.5 M1 4.5 L4 7.5 M13 4.5 L10 1.5 M13 4.5 L10 7.5 M1 4.5 H13" stroke="#444" stroke-width="1.3" fill="none"/></svg>
<div class="a" style="left:551px;top:384px;width:1px;height:22px;background:#3a3a3a;"></div>
<svg style="left:556px;top:389px" width="14" height="12" viewBox="0 0 14 12"><path d="M1 5 V11 H13 V7 M3 7 H11 M9 4 L12 7 L9 10" stroke="#c8c8c8" stroke-width="1.4" fill="none"/><path d="M3 4 H10" stroke="#c8c8c8" stroke-width="1.4"/></svg>
<svg style="left:581px;top:390px" width="11" height="11" viewBox="0 0 11 11"><path d="M1 1 L10 5.5 L1 10Z" fill="#d0d0d0"/></svg>
<svg style="left:642px;top:389px" width="14" height="12" viewBox="0 0 14 12"><path d="M3 4 H9 Q12 4 12 7 Q12 10 9 10 H2 M5 1.5 L2.5 4 L5 6.5" stroke="#c8c8c8" stroke-width="1.3" fill="none"/><path d="M2 10.5 H12" stroke="#c8c8c8" stroke-width="1.3"/></svg>
<div class="a" style="left:662px;top:394.5px;width:6px;height:1.5px;background:#c8c8c8;"></div>
<svg style="left:669px;top:390px" width="12" height="12" viewBox="0 0 12 12"><circle cx="6" cy="6" r="4" fill="none" stroke="#d0d0d0" stroke-width="1.5"/></svg>
<div class="a" style="left:681px;top:394.5px;width:41px;height:1px;background:#555;"></div>
<svg style="left:729px;top:390px" width="14" height="9" viewBox="0 0 14 9"><path d="M1 8 L5 3 L7 5 L9 1 L13 8Z" fill="#d0d0d0"/></svg>
<div class="a" style="left:35px;top:410px;width:720px;height:1px;background:#262626;"></div>
<svg style="left:47px;top:419px" width="12" height="12" viewBox="0 0 12 12"><rect x="0.5" y="0.5" width="11" height="11" fill="none" stroke="#bdbdbd"/><path d="M6 3 V9 M3 6 H9" stroke="#bdbdbd" stroke-width="1.2"/></svg>
<svg style="left:67px;top:419px" width="14" height="11" viewBox="0 0 14 11"><path d="M1 1 H5 L6 2.5 H13 V10 H1Z" fill="#a8a8a8"/></svg>
<svg style="left:90px;top:418px" width="11" height="13" viewBox="0 0 11 13"><path d="M1 2.5 H10 M4 2.5 V1 H7 V2.5 M2 3.5 L3 12 H8 L9 3.5" stroke="#a8a8a8" fill="none" stroke-width="1.1"/><path d="M4 5 V10 M5.5 5 V10 M7 5 V10" stroke="#a8a8a8" stroke-width=".7"/></svg>
<div class="a" style="left:117px;top:424px;width:2.5px;height:2.5px;background:#c8c8c8;border-radius:50%"></div>
<div class="a" style="left:129.5px;top:418px;width:5px;height:13px;background:transparent;border:1.3px solid #c8c8c8;border-radius:1px"></div>
<svg style="left:143px;top:419px" width="14" height="12" viewBox="0 0 14 12"><path d="M1 6 Q7 0 13 6 Q7 12 1 6Z" fill="none" stroke="#a8a8a8" stroke-width="1.1"/><circle cx="7" cy="6" r="2" fill="#a8a8a8"/><path d="M2 1 L12 11" stroke="#a8a8a8" stroke-width="1.1"/></svg>
<svg style="left:162px;top:418px" width="11" height="13" viewBox="0 0 11 13"><path d="M3 6 V4 Q3 1 5.5 1 Q8 1 8 4 V6" fill="none" stroke="#c8c8c8" stroke-width="1.3"/><rect x="1.5" y="6" width="8" height="6.5" fill="#c8c8c8"/><rect x="5" y="8" width="1" height="2.5" fill="#333"/></svg>
<div class="a" style="left:185px;top:411px;width:570px;height:27px;background:#2c2c2c;"></div>
<div class="a" style="left:185px;top:421px;width:559px;height:1px;background:#262626;"></div>
<div class="t" style="left:203.69px;top:430.00px;font-size:6.5px;color:#d0d0d0;">5</div>
<div class="t" style="left:225.39px;top:430.00px;font-size:6.5px;color:#d0d0d0;">10</div>
<div class="t" style="left:248.89px;top:430.00px;font-size:6.5px;color:#d0d0d0;">15</div>
<div class="t" style="left:272.39px;top:430.00px;font-size:6.5px;color:#d0d0d0;">20</div>
<div class="t" style="left:295.89px;top:430.00px;font-size:6.5px;color:#d0d0d0;">25</div>
<div class="t" style="left:319.39px;top:430.00px;font-size:6.5px;color:#d0d0d0;">30</div>
<div class="t" style="left:342.89px;top:430.00px;font-size:6.5px;color:#d0d0d0;">35</div>
<div class="t" style="left:366.39px;top:430.00px;font-size:6.5px;color:#d0d0d0;">40</div>
<div class="t" style="left:389.89px;top:430.00px;font-size:6.5px;color:#d0d0d0;">45</div>
<div class="t" style="left:413.39px;top:430.00px;font-size:6.5px;color:#d0d0d0;">50</div>
<div class="t" style="left:436.89px;top:430.00px;font-size:6.5px;color:#d0d0d0;">55</div>
<div class="t" style="left:460.39px;top:430.00px;font-size:6.5px;color:#d0d0d0;">60</div>
<div class="t" style="left:483.89px;top:430.00px;font-size:6.5px;color:#d0d0d0;">65</div>
<div class="t" style="left:507.39px;top:430.00px;font-size:6.5px;color:#d0d0d0;">70</div>
<div class="t" style="left:530.89px;top:430.00px;font-size:6.5px;color:#d0d0d0;">75</div>
<div class="t" style="left:554.39px;top:430.00px;font-size:6.5px;color:#d0d0d0;">80</div>
<div class="t" style="left:577.89px;top:430.00px;font-size:6.5px;color:#d0d0d0;">85</div>
<div class="t" style="left:601.39px;top:430.00px;font-size:6.5px;color:#d0d0d0;">90</div>
<div class="t" style="left:624.89px;top:430.00px;font-size:6.5px;color:#d0d0d0;">95</div>
<div class="t" style="left:646.58px;top:430.00px;font-size:6.5px;color:#d0d0d0;">100</div>
<div class="t" style="left:670.08px;top:430.00px;font-size:6.5px;color:#d0d0d0;">105</div>
<div class="t" style="left:693.82px;top:430.00px;font-size:6.5px;color:#d0d0d0;">110</div>
<div class="t" style="left:717.32px;top:430.00px;font-size:6.5px;color:#d0d0d0;">115</div>
<div class="a" style="left:208.8px;top:412px;width:1px;height:9px;background:#333;"></div>
<div class="a" style="left:232.3px;top:412px;width:1px;height:9px;background:#333;"></div>
<div class="a" style="left:255.8px;top:412px;width:1px;height:9px;background:#333;"></div>
<div class="a" style="left:279.4px;top:412px;width:1px;height:9px;background:#333;"></div>
<div class="a" style="left:302.9px;top:412px;width:1px;height:9px;background:#333;"></div>
<div class="a" style="left:326.4px;top:412px;width:1px;height:9px;background:#333;"></div>
<div class="a" style="left:349.9px;top:412px;width:1px;height:9px;background:#333;"></div>
<div class="a" style="left:373.4px;top:412px;width:1px;height:9px;background:#333;"></div>
<div class="a" style="left:396.9px;top:412px;width:1px;height:9px;background:#333;"></div>
<div class="a" style="left:420.4px;top:412px;width:1px;height:9px;background:#333;"></div>
<div class="a" style="left:443.9px;top:412px;width:1px;height:9px;background:#333;"></div>
<div class="a" style="left:467.4px;top:412px;width:1px;height:9px;background:#333;"></div>
<div class="a" style="left:490.9px;top:412px;width:1px;height:9px;background:#333;"></div>
<div class="a" style="left:514.4px;top:412px;width:1px;height:9px;background:#333;"></div>
<div class="a" style="left:537.9px;top:412px;width:1px;height:9px;background:#333;"></div>
<div class="a" style="left:561.4px;top:412px;width:1px;height:9px;background:#333;"></div>
<div class="a" style="left:584.9px;top:412px;width:1px;height:9px;background:#333;"></div>
<div class="a" style="left:608.4px;top:412px;width:1px;height:9px;background:#333;"></div>
<div class="a" style="left:631.9px;top:412px;width:1px;height:9px;background:#333;"></div>
<div class="a" style="left:655.4px;top:412px;width:1px;height:9px;background:#333;"></div>
<div class="a" style="left:678.9px;top:412px;width:1px;height:9px;background:#333;"></div>
<div class="a" style="left:702.4px;top:412px;width:1px;height:9px;background:#333;"></div>
<div class="a" style="left:725.9px;top:412px;width:1px;height:9px;background:#333;"></div>
<div class="t" style="left:320.5px;top:414.42px;font-size:6px;color:#c4c4c4;">1s</div>
<div class="t" style="left:461.5px;top:414.42px;font-size:6px;color:#c4c4c4;">2s</div>
<div class="t" style="left:602.5px;top:414.42px;font-size:6px;color:#c4c4c4;">3s</div>
<div class="t" style="left:740px;top:414.42px;font-size:6px;color:#c4c4c4;">4</div>
<div class="t" style="left:740.5px;top:430.00px;font-size:6.5px;color:#c4c4c4;">1</div>
<div class="a" style="left:35px;top:438.5px;width:150px;height:16.8px;background:#2c2c2c;"></div>
<div class="a" style="left:35px;top:438.5px;width:150px;height:1px;background:#262626;"></div>
<svg style="left:53px;top:442.4px" width="10" height="10" viewBox="0 0 10 10"><path d="M0.7 0.7 H9.3 V6.5 L6.5 9.3 H0.7Z" fill="#8a8a8a" stroke="#c4c4c4" stroke-width="1.2"/><path d="M9.3 6.5 H6.5 V9.3" fill="#c4c4c4" stroke="#c4c4c4" stroke-width=".8"/></svg>
<div class="t" style="left:66.5px;top:443.57px;font-size:7px;color:#dedede;font-weight:bold;transform:scaleX(0.862);transform-origin:0 0;">angelfish</div>
<div class="a" style="left:131px;top:442.9px;width:4.5px;height:8px;background:#3f9b8c;border-radius:1px"></div>
<svg style="left:163px;top:441.9px" width="8" height="10" viewBox="0 0 8 10"><path d="M2 4.5 V3 Q2 1 4 1 Q6 1 6 3 V4.5" fill="none" stroke="#c8c8c8" stroke-width="1.2"/><rect x="0.8" y="4.5" width="6.4" height="5" fill="#c8c8c8"/></svg>
<div class="a" style="left:185px;top:438.5px;width:559px;height:16.8px;background:#9a9a9a;"></div>
<div class="a" style="left:185px;top:438.5px;width:559px;height:1px;background:#3a3a3a;"></div>
<div class="a" style="left:185px;top:440.0px;width:559px;height:0px;background:transparent;border-top:1px dotted #a9a9a9"></div>
<div class="a" style="left:35px;top:455.3px;width:150px;height:16.8px;background:#2c2c2c;"></div>
<div class="a" style="left:35px;top:455.3px;width:150px;height:1px;background:#262626;"></div>
<svg style="left:53px;top:459.2px" width="10" height="10" viewBox="0 0 10 10"><path d="M0.7 0.7 H9.3 V6.5 L6.5 9.3 H0.7Z" fill="#8a8a8a" stroke="#c4c4c4" stroke-width="1.2"/><path d="M9.3 6.5 H6.5 V9.3" fill="#c4c4c4" stroke="#c4c4c4" stroke-width=".8"/></svg>
<div class="t" style="left:66.5px;top:460.37px;font-size:7px;color:#dedede;font-weight:bold;transform:scaleX(0.890);transform-origin:0 0;">Sea_Horse</div>
<div class="a" style="left:131px;top:459.7px;width:4.5px;height:8px;background:#55dde6;border-radius:1px"></div>
<svg style="left:163px;top:458.7px" width="8" height="10" viewBox="0 0 8 10"><path d="M2 4.5 V3 Q2 1 4 1 Q6 1 6 3 V4.5" fill="none" stroke="#c8c8c8" stroke-width="1.2"/><rect x="0.8" y="4.5" width="6.4" height="5" fill="#c8c8c8"/></svg>
<div class="a" style="left:185px;top:455.3px;width:559px;height:16.8px;background:#9a9a9a;"></div>
<div class="a" style="left:185px;top:455.3px;width:559px;height:1px;background:#3a3a3a;"></div>
<div class="a" style="left:185px;top:456.8px;width:559px;height:0px;background:transparent;border-top:1px dotted #a9a9a9"></div>
<div class="a" style="left:35px;top:472.1px;width:150px;height:16.8px;background:#2c2c2c;"></div>
<div class="a" style="left:35px;top:472.1px;width:150px;height:1px;background:#262626;"></div>
<svg style="left:53px;top:476.0px" width="10" height="10" viewBox="0 0 10 10"><path d="M0.7 0.7 H9.3 V6.5 L6.5 9.3 H0.7Z" fill="#8a8a8a" stroke="#c4c4c4" stroke-width="1.2"/><path d="M9.3 6.5 H6.5 V9.3" fill="#c4c4c4" stroke="#c4c4c4" stroke-width=".8"/></svg>
<div class="t" style="left:66.5px;top:477.17px;font-size:7px;color:#dedede;font-weight:bold;transform:scaleX(0.921);transform-origin:0 0;">corals</div>
<div class="a" style="left:131px;top:476.5px;width:4.5px;height:8px;background:#d65ad6;border-radius:1px"></div>
<svg style="left:163px;top:475.5px" width="8" height="10" viewBox="0 0 8 10"><path d="M2 4.5 V3 Q2 1 4 1 Q6 1 6 3 V4.5" fill="none" stroke="#c8c8c8" stroke-width="1.2"/><rect x="0.8" y="4.5" width="6.4" height="5" fill="#c8c8c8"/></svg>
<div class="a" style="left:185px;top:472.1px;width:559px;height:16.8px;background:#9a9a9a;"></div>
<div class="a" style="left:185px;top:472.1px;width:559px;height:1px;background:#3a3a3a;"></div>
<div class="a" style="left:185px;top:473.6px;width:559px;height:0px;background:transparent;border-top:1px dotted #a9a9a9"></div>
<div class="a" style="left:35px;top:488.9px;width:150px;height:16.8px;background:#2c2c2c;"></div>
<div class="a" style="left:35px;top:488.9px;width:150px;height:1px;background:#262626;"></div>
<svg style="left:53px;top:492.8px" width="10" height="10" viewBox="0 0 10 10"><path d="M0.7 0.7 H9.3 V6.5 L6.5 9.3 H0.7Z" fill="#8a8a8a" stroke="#c4c4c4" stroke-width="1.2"/><path d="M9.3 6.5 H6.5 V9.3" fill="#c4c4c4" stroke="#c4c4c4" stroke-width=".8"/></svg>
<div class="t" style="left:66.5px;top:493.97px;font-size:7px;color:#dedede;font-weight:bold;transform:scaleX(0.893);transform-origin:0 0;">Star_Fish</div>
<div class="a" style="left:131px;top:493.3px;width:4.5px;height:8px;background:#55dde6;border-radius:1px"></div>
<svg style="left:163px;top:492.3px" width="8" height="10" viewBox="0 0 8 10"><path d="M2 4.5 V3 Q2 1 4 1 Q6 1 6 3 V4.5" fill="none" stroke="#c8c8c8" stroke-width="1.2"/><rect x="0.8" y="4.5" width="6.4" height="5" fill="#c8c8c8"/></svg>
<div class="a" style="left:185px;top:488.9px;width:559px;height:16.8px;background:#9a9a9a;"></div>
<div class="a" style="left:185px;top:488.9px;width:559px;height:1px;background:#3a3a3a;"></div>
<div class="a" style="left:185px;top:490.4px;width:559px;height:0px;background:transparent;border-top:1px dotted #a9a9a9"></div>
<div class="a" style="left:35px;top:505.7px;width:150px;height:16.8px;background:#2c2c2c;"></div>
<div class="a" style="left:35px;top:505.7px;width:150px;height:1px;background:#262626;"></div>
<svg style="left:53px;top:509.6px" width="10" height="10" viewBox="0 0 10 10"><path d="M0.7 0.7 H9.3 V6.5 L6.5 9.3 H0.7Z" fill="#8a8a8a" stroke="#c4c4c4" stroke-width="1.2"/><path d="M9.3 6.5 H6.5 V9.3" fill="#c4c4c4" stroke="#c4c4c4" stroke-width=".8"/></svg>
<div class="t" style="left:66.5px;top:510.77px;font-size:7px;color:#dedede;font-weight:bold;transform:scaleX(0.925);transform-origin:0 0;">seaweed</div>
<div class="a" style="left:131px;top:510.1px;width:4.5px;height:8px;background:#e98a3c;border-radius:1px"></div>
<svg style="left:163px;top:509.1px" width="8" height="10" viewBox="0 0 8 10"><path d="M2 4.5 V3 Q2 1 4 1 Q6 1 6 3 V4.5" fill="none" stroke="#c8c8c8" stroke-width="1.2"/><rect x="0.8" y="4.5" width="6.4" height="5" fill="#c8c8c8"/></svg>
<div class="a" style="left:185px;top:505.7px;width:559px;height:16.8px;background:#9a9a9a;"></div>
<div class="a" style="left:185px;top:505.7px;width:559px;height:1px;background:#3a3a3a;"></div>
<div class="a" style="left:185px;top:507.2px;width:559px;height:0px;background:transparent;border-top:1px dotted #a9a9a9"></div>
<div class="a" style="left:35px;top:522.5px;width:150px;height:16.8px;background:#44679c;"></div>
<div class="a" style="left:35px;top:522.5px;width:150px;height:1px;background:#262626;"></div>
<svg style="left:53px;top:526.4px" width="10" height="10" viewBox="0 0 10 10"><path d="M0.7 0.7 H9.3 V6.5 L6.5 9.3 H0.7Z" fill="#8a8a8a" stroke="#c4c4c4" stroke-width="1.2"/><path d="M9.3 6.5 H6.5 V9.3" fill="#c4c4c4" stroke="#c4c4c4" stroke-width=".8"/></svg>
<div class="t" style="left:66.5px;top:527.57px;font-size:7px;color:#ececec;font-weight:bold;transform:scaleX(0.959);transform-origin:0 0;">jellyfish</div>
<div class="a" style="left:131px;top:526.9px;width:4.5px;height:8px;background:#55dde6;border-radius:1px"></div>
<div class="a" style="left:185px;top:522.5px;width:559px;height:16.8px;background:#9a9a9a;"></div>
<div class="a" style="left:185px;top:522.5px;width:559px;height:1px;background:#3a3a3a;"></div>
<div class="a" style="left:185px;top:524.0px;width:559px;height:0px;background:transparent;border-top:1px dotted #a9a9a9"></div>
<div class="a" style="left:35px;top:535px;width:720px;height:5px;background:#2a2a2a;"></div>
<div class="a" style="left:185px;top:535px;width:559px;height:1px;background:#3a3a3a;"></div>
<div class="a" style="left:184.5px;top:411.5px;width:4px;height:26px;background:#4a7dc6;border-radius:1px"></div>
<div class="a" style="left:184.8px;top:438.5px;width:3.4px;height:96.5px;background:#9db3d6;"></div>
<div class="a" style="left:184.3px;top:448.3px;width:4.4px;height:3.4px;background:#3a4a5a;border:1px solid #1e2630;border-radius:50%"></div>
<div class="a" style="left:184.3px;top:465.1px;width:4.4px;height:3.4px;background:#3a4a5a;border:1px solid #1e2630;border-radius:50%"></div>
<div class="a" style="left:184.3px;top:481.9px;width:4.4px;height:3.4px;background:#3a4a5a;border:1px solid #1e2630;border-radius:50%"></div>
<div class="a" style="left:184.3px;top:498.7px;width:4.4px;height:3.4px;background:#3a4a5a;border:1px solid #1e2630;border-radius:50%"></div>
<div class="a" style="left:184.3px;top:515.5px;width:4.4px;height:3.4px;background:#3a4a5a;border:1px solid #1e2630;border-radius:50%"></div>
<div class="a" style="left:747.5px;top:440px;width:2px;height:62px;background:#777;border-radius:1px"></div>
<div class="a" style="left:757px;top:27px;width:203px;height:513px;background:#2f2f2f;"></div>
<div class="a" style="left:757px;top:27px;width:203px;height:1px;background:#262626;"></div>
<svg style="left:950px;top:29px" width="7" height="5" viewBox="0 0 7 5"><path d="M0.5 0.5 L2.5 2.5 L0.5 4.5 M3.5 0.5 L5.5 2.5 L3.5 4.5" stroke="#b0b0b0" fill="none" stroke-width="1"/></svg>
<div class="a" style="left:949px;top:37.5px;width:7px;height:2.2px;background:#8a8a8a;"></div>
<div class="a" style="left:949px;top:40.8px;width:7px;height:2.2px;background:#8a8a8a;"></div>
<div class="t" style="left:761px;top:37.57px;font-size:7px;color:#e6e6e6;font-weight:bold;transform:scaleX(1.002);transform-origin:0 0;">Assets</div>
<div class="t" style="left:793px;top:37.15px;font-size:7.5px;color:#8e8e8e;font-weight:bold;transform:scaleX(0.943);transform-origin:0 0;">Properties</div>
<div class="t" style="left:839px;top:37.15px;font-size:7.5px;color:#8e8e8e;font-weight:bold;transform:scaleX(0.919);transform-origin:0 0;">Color</div>
<div class="t" style="left:867px;top:37.15px;font-size:7.5px;color:#8e8e8e;font-weight:bold;transform:scaleX(0.987);transform-origin:0 0;">Align</div>
<div class="t" style="left:895px;top:37.15px;font-size:7.5px;color:#8e8e8e;font-weight:bold;transform:scaleX(0.983);transform-origin:0 0;">Library</div>
<div class="a" style="left:800px;top:58px;width:55px;height:22px;background:#454545;border-radius:3px"></div>
<div class="t" style="left:812px;top:64.08px;font-size:10.3px;color:#ececec;transform:scaleX(0.935);transform-origin:0 0;">Default</div>
<div class="t" style="left:871px;top:64.08px;font-size:10.3px;color:#ececec;transform:scaleX(0.930);transform-origin:0 0;">Custom</div>
<div class="a" style="left:767.5px;top:91px;width:154px;height:20px;background:#242424;border:1px solid #383838;border-radius:2px"></div>
<svg style="left:774px;top:94px" width="12" height="13" viewBox="0 0 12 13"><circle cx="5" cy="5.5" r="4" fill="none" stroke="#c8c8c8" stroke-width="1.2"/><path d="M8 8.5 L11 11.5" stroke="#c8c8c8" stroke-width="1.3"/></svg>
<div class="t" style="left:795px;top:97.07px;font-size:7px;color:#c0c0c0;font-style:italic;transform:scaleX(0.947);transform-origin:0 0;">Search</div>
<svg style="left:931px;top:94px" width="12" height="12" viewBox="0 0 12 12"><rect x="0.5" y="1" width="2" height="2" fill="#c8c8c8"/><rect x="0.5" y="5" width="2" height="2" fill="#c8c8c8"/><rect x="0.5" y="9" width="2" height="2" fill="#c8c8c8"/><path d="M4 2 H11.5 M4 6 H11.5 M4 10 H11.5" stroke="#c8c8c8" stroke-width="1.3"/><path d="M0.5 4 H11.5 M0.5 8 H11.5" stroke="#c8c8c8" stroke-width=".5"/></svg>
<div class="a" style="left:757px;top:122px;width:203px;height:1.2px;background:#262626;"></div>
<svg style="left:766px;top:133px" width="8" height="6" viewBox="0 0 8 6"><path d="M1 1 L4 4 L7 1" stroke="#bdbdbd" stroke-width="1.2" fill="none"/></svg>
<div class="t" style="left:779px;top:132.73px;font-size:8px;color:#dcdcdc;font-weight:bold;transform:scaleX(1.001);transform-origin:0 0;">Animated</div>
<div class="a" style="left:768px;top:155px;width:153px;height:20px;background:#2b2b2b;border:1px solid #3a3a3a;border-radius:2px"></div>
<div class="t" style="left:776px;top:161.22px;font-size:8.6px;color:#dcdcdc;transform:scaleX(0.903);transform-origin:0 0;">Characters</div>
<svg style="left:906px;top:163px" width="9" height="6" viewBox="0 0 9 6"><path d="M1 1 L4.5 4.5 L8 1" stroke="#d8d8d8" stroke-width="1.4" fill="none"/></svg>
<div class="a" style="left:768px;top:182.5px;width:153px;height:20px;background:#2b2b2b;border:1px solid #3a3a3a;border-radius:2px"></div>
<div class="t" style="left:776px;top:188.72px;font-size:8.6px;color:#dcdcdc;transform:scaleX(0.950);transform-origin:0 0;">Objects</div>
<svg style="left:906px;top:190.5px" width="9" height="6" viewBox="0 0 9 6"><path d="M1 1 L4.5 4.5 L8 1" stroke="#d8d8d8" stroke-width="1.4" fill="none"/></svg>
<svg style="left:931px;top:159px" width="13" height="13" viewBox="0 0 13 13"><path d="M0.5 1 H12.5 L8 6 V12 L5 10.5 V6Z" fill="#d8d8d8"/></svg>
<div class="a" style="left:771.5px;top:214px;width:85.5px;height:48px;background:#d0d0d0;border-radius:1px"></div>
<div class="a" style="left:859.5px;top:214px;width:85.5px;height:48px;background:#d0d0d0;border-radius:1px"></div>
<div class="a" style="left:771.5px;top:265px;width:85.5px;height:48px;background:#d0d0d0;border-radius:1px"></div>
<div class="a" style="left:859.5px;top:265px;width:85.5px;height:48px;background:#d0d0d0;border-radius:1px"></div>
<div class="a" style="left:771.5px;top:316px;width:85.5px;height:48px;background:#d0d0d0;border-radius:1px"></div>
<div class="a" style="left:859.5px;top:316px;width:85.5px;height:48px;background:#d0d0d0;border-radius:1px"></div>
<div class="a" style="left:771.5px;top:367px;width:85.5px;height:48px;background:#d0d0d0;border-radius:1px"></div>
<div class="a" style="left:859.5px;top:367px;width:85.5px;height:48px;background:#d0d0d0;border-radius:1px"></div>
<div class="a" style="left:951px;top:215px;width:3px;height:22px;background:#6a6a6a;border-radius:1px"></div>
<div class="t" style="left:891px;top:427.70px;font-size:9.8px;color:#e8e8e8;transform:scaleX(0.948);transform-origin:0 0;">Show next</div>
<svg style="left:938.5px;top:427px" width="7" height="10" viewBox="0 0 7 10"><path d="M3.5 0.5 V9 M0.8 6 L3.5 9 L6.2 6" stroke="#e0e0e0" stroke-width="1.2" fill="none"/></svg>
<div class="a" style="left:757px;top:454px;width:203px;height:1.2px;background:#262626;"></div>
<svg style="left:766px;top:465px" width="6" height="9" viewBox="0 0 6 9"><path d="M1 1 L4.5 4.5 L1 8" stroke="#bdbdbd" stroke-width="1.2" fill="none"/></svg>
<div class="t" style="left:779px;top:465.65px;font-size:7.5px;color:#dcdcdc;font-weight:bold;transform:scaleX(1.004);transform-origin:0 0;">Static</div>
<div class="a" style="left:757px;top:482px;width:203px;height:1.2px;background:#262626;"></div>
<svg style="left:766px;top:492px" width="6" height="9" viewBox="0 0 6 9"><path d="M1 1 L4.5 4.5 L1 8" stroke="#bdbdbd" stroke-width="1.2" fill="none"/></svg>
<div class="t" style="left:779px;top:493.15px;font-size:7.5px;color:#dcdcdc;font-weight:bold;transform:scaleX(1.007);transform-origin:0 0;">Sound clips</div>
<div class="a" style="left:757px;top:508.5px;width:203px;height:1.2px;background:#262626;"></div>
<div class="a" style="left:769px;top:522px;width:178px;height:1px;background:#5a5a5a;"></div>
<svg style="left:772px;top:529px" width="13" height="11" viewBox="0 0 13 11"><path d="M3 9 Q0 9 0.5 6 Q1 4 3 4 Q4 1 7 1 Q10 1 11 4 Q13 4.5 12.5 7 Q12 9 10 9Z" fill="#555"/></svg>
<svg style="left:933px;top:529px" width="11" height="11" viewBox="0 0 11 11"><path d="M0.5 2 H10.5 M4 2 V0.5 H7 V2 M1.5 3 L2.5 11 H8.5 L9.5 3Z" stroke="#b8b8b8" fill="none" stroke-width="1.1"/><path d="M4 4.5 V10 M5.5 4.5 V10 M7 4.5 V10" stroke="#b8b8b8" stroke-width=".8"/></svg>
<svg style="left:757px;top:205px" width="203" height="215" viewBox="757 205 203 215"><ellipse cx="812.5" cy="247" rx="14" ry="9" fill="#f6c8d6" stroke="#333" stroke-width="0.8"/><ellipse cx="824" cy="248" rx="3" ry="3" fill="#e9a0b8" stroke="#333" stroke-width="0.5"/><path d="M800 252 L798 250 M805 255 L804 258 M818 255 L820 258" stroke="#333"/><ellipse cx="802" cy="231" rx="7" ry="8" fill="#fbf4d8" stroke="#555" stroke-width="0.5"/><ellipse cx="803" cy="230" rx="4" ry="3.5" fill="#d98a3a"/><path d="M814 240 Q812 232 813 226 L816 223 L818 226 Q817 233 818 240Z" fill="#222"/><path d="M813 227 Q808 224 805 220 M817 226 Q822 225 825 220" stroke="#222" stroke-width="1"/><ellipse cx="827" cy="219" rx="3" ry="2.5" fill="#b88a3a"/><path d="M900 224 L902 217 L905 220 L907 213.5 L910 219 L914 216 L913 221 L918 222 L915 225Z" fill="#1a1a1a"/><path d="M893 226 Q896 221 906 222 Q916 223 918 229 L914 236 Q904 238 895 235Z" fill="#e6e6e6" stroke="#9a9a9a" stroke-width="0.6"/><path d="M895 227 L915 226 M894 231 L916 231 M896 234 L913 235" stroke="#b0b0b0" stroke-width="0.6"/><path d="M915 227 L918 229 L915 231Z" fill="#222"/><path d="M894 231 L900 231 L900 234 L894 234Z" fill="#888"/><circle cx="902" cy="233" r="1.5" fill="#ccd"/><path d="M892 238 Q900 236 912 240 L914 252 Q906 256 896 252Z" fill="#e8e8e8" stroke="#9a9a9a" stroke-width="0.6"/><path d="M905 242 L912 243 L913 251 L906 252Z" fill="#5f8f7a"/><path d="M912 240 L919 237 M894 252 L886 262 M900 252 L896 262 M908 253 L913 262 M912 252 L919 261" stroke="#a8a8a8" stroke-width="2.2" stroke-linecap="round"/><path d="M893 242 L911 244 M893 246 L912 248 M887 258 L897 256 M908 258 L917 257" stroke="#c8c8c8" stroke-width="0.6"/><path d="M776 287 Q784 293 796 291 Q806 281 818 278 Q828 272 834 276 L842 274 Q850 280 856 292 L848 300 Q840 298 834 300 L828 305 L818 306 L816 299 Q808 301 800 302 L797 306 L789 305 L793 296 Q784 296 776 293Z" fill="#6a4832" stroke="#3a261a" stroke-width="0.6"/><path d="M773 286 Q777 297 791 296 Q784 290 779 283Z" fill="#fff" stroke="#555" stroke-width=".5"/><path d="M828 281 Q840 276 850 284 Q857 292 853 298 Q846 300 838 296 Q832 292 828 286Z" fill="#f4f4f4" stroke="#555" stroke-width=".5"/><path d="M846 290 Q852 296 846 302 Q840 304 836 300Z" fill="#eee" stroke="#555" stroke-width=".5"/><path d="M838 276 L842 270 L845 277 M845 276 L850 273 L849 280" fill="#e49aa8" stroke="#b06070" stroke-width=".5"/><path d="M790 305 L799 307 M816 306 L827 307" stroke="#fff" stroke-width="2.2"/><clipPath id="c4"><rect x="859.5" y="265" width="85.5" height="48"/></clipPath><g clip-path="url(#c4)"><circle cx="886.5" cy="283" r="24" fill="#f2a6b4" stroke="#d98a9a" stroke-width=".6"/><path d="M868 298 Q866 276 886 270 M874 302 Q872 284 890 278 M880 305 Q880 292 893 287" stroke="#e48a9c" stroke-width="1.6" fill="none"/><path d="M864 314 Q868 306 880 303 Q895 296 905 294 Q930 292 946 300 L946 314Z" fill="#f7e3a0" stroke="#cdb46e" stroke-width=".6"/><path d="M872 305 Q888 299 905 294.5" stroke="#333" stroke-width="1.1" fill="none"/><circle cx="898.4" cy="291.3" r="6.3" fill="#fff" stroke="#aaa" stroke-width=".5"/><path d="M895.4 288.3 L901.4 294.3 M901.4 288.3 L895.4 294.3" stroke="#111" stroke-width="2"/><circle cx="933.3" cy="297" r="6" fill="#fff" stroke="#aaa" stroke-width=".5"/><path d="M930.5 294.2 L936.1 299.8 M936.1 294.2 L930.5 299.8" stroke="#111" stroke-width="2"/></g><path d="M804 328 Q804 318 814 316.5 Q825 316 827 327Z" fill="#c8282a"/><path d="M803 325 Q815 323 827 326 L827 329.5 Q815 327 803 329Z" fill="#f2f2f2" stroke="#aaa" stroke-width=".4"/><circle cx="801.5" cy="328.5" r="2.6" fill="#f2f2f2" stroke="#aaa" stroke-width=".4"/><ellipse cx="817" cy="333" rx="7" ry="3.5" fill="#f0dcc0"/><path d="M809 334 Q808 344 818 347 Q829 346 829 336 Q820 338 809 334Z" fill="#fafafa" stroke="#999" stroke-width=".5"/><path d="M806 338 Q803 345 806 350 L826 352 L824 341Z" fill="#b82226"/><rect x="812" y="347" width="14" height="2.2" fill="#222"/><rect x="820" y="346.5" width="3" height="3" fill="#e0b030"/><path d="M808 352 L824 352 L826 358 L808 358Z" fill="#b82226"/><path d="M807 358 L814 358 L814 362 L806 362Z M818 358 L826 358 L827 362 L819 362Z" fill="#3a1a1a"/><path d="M807 356 L814 356 M818 356 L826 356" stroke="#f2f2f2" stroke-width="1.5"/><path d="M936 331 Q940 324 946 322" stroke="#111" stroke-width="1" fill="none"/><path d="M900 333 Q918 326 932 332 Q938 338 934 348 L940 344 Q944 346 941 350 L928 356 Q915 360 902 354Z" fill="#f4c35a" stroke="#111" stroke-width="1.8" stroke-linejoin="round"/><path d="M918 346 Q924 348 928 352 M912 352 L918 358" stroke="#111" stroke-width="1.3" fill="none"/><path d="M872 330 Q882 322 896 326 Q906 332 905 344 Q903 356 890 358 Q876 358 873 348 Q870 340 872 330Z" fill="#f4c35a" stroke="#111" stroke-width="1.8"/><path d="M876 328 Q866 330 863 346 Q866 351 871 348 Q876 340 880 333Z" fill="#f4c35a" stroke="#111" stroke-width="1.6"/><path d="M890 324 Q902 318 906 328 Q904 332 897 331Z" fill="#f4c35a" stroke="#111" stroke-width="1.4"/><ellipse cx="891" cy="343" rx="6" ry="7" fill="#111"/><circle cx="884" cy="334" r="1" fill="#111"/><circle cx="892" cy="332" r="1" fill="#111"/><path d="M787 406.5 Q798 401 809 402.7" stroke="#111" stroke-width="1.1" fill="none"/><path d="M808 390 Q805 402 808 411 L832 411 Q836 400 830 388Z" fill="#f4c35a" stroke="#111" stroke-width="1.8" stroke-linejoin="round"/><path d="M816 396 Q823 396 820 403 Q816 406 822 410 M826 404 L828 411" stroke="#111" stroke-width="1.4" fill="none"/><path d="M810 378 Q814 368 826 368 Q840 369 841 381 Q840 392 828 394 Q814 394 811 386Z" fill="#f4c35a" stroke="#111" stroke-width="1.8"/><path d="M814 372 Q805 375 805 390 Q810 394 815 388 Q817 380 818 375Z" fill="#f4c35a" stroke="#111" stroke-width="1.6"/><path d="M830 368 Q841 366 842 376 Q838 379 834 375Z" fill="#f4c35a" stroke="#111" stroke-width="1.4"/><ellipse cx="829" cy="383" rx="5.5" ry="6.5" fill="#111"/><path d="M893 374 Q893 366 900 366 Q907 366 907 374Z" fill="#b9d88a"/><path d="M894 374 L899 389 M906 374 L901 389 M900 374 L900 389" stroke="#fff" stroke-width=".8"/><ellipse cx="901" cy="400" rx="13" ry="10" fill="#f2a6ae" stroke="#d88890" stroke-width=".6"/><path d="M895 410 L895 413 M906 410 L906 413" stroke="#d88890" stroke-width="1.5"/><ellipse cx="892" cy="401" rx="3" ry="2" fill="#e88a96"/></svg>
</body></html>
